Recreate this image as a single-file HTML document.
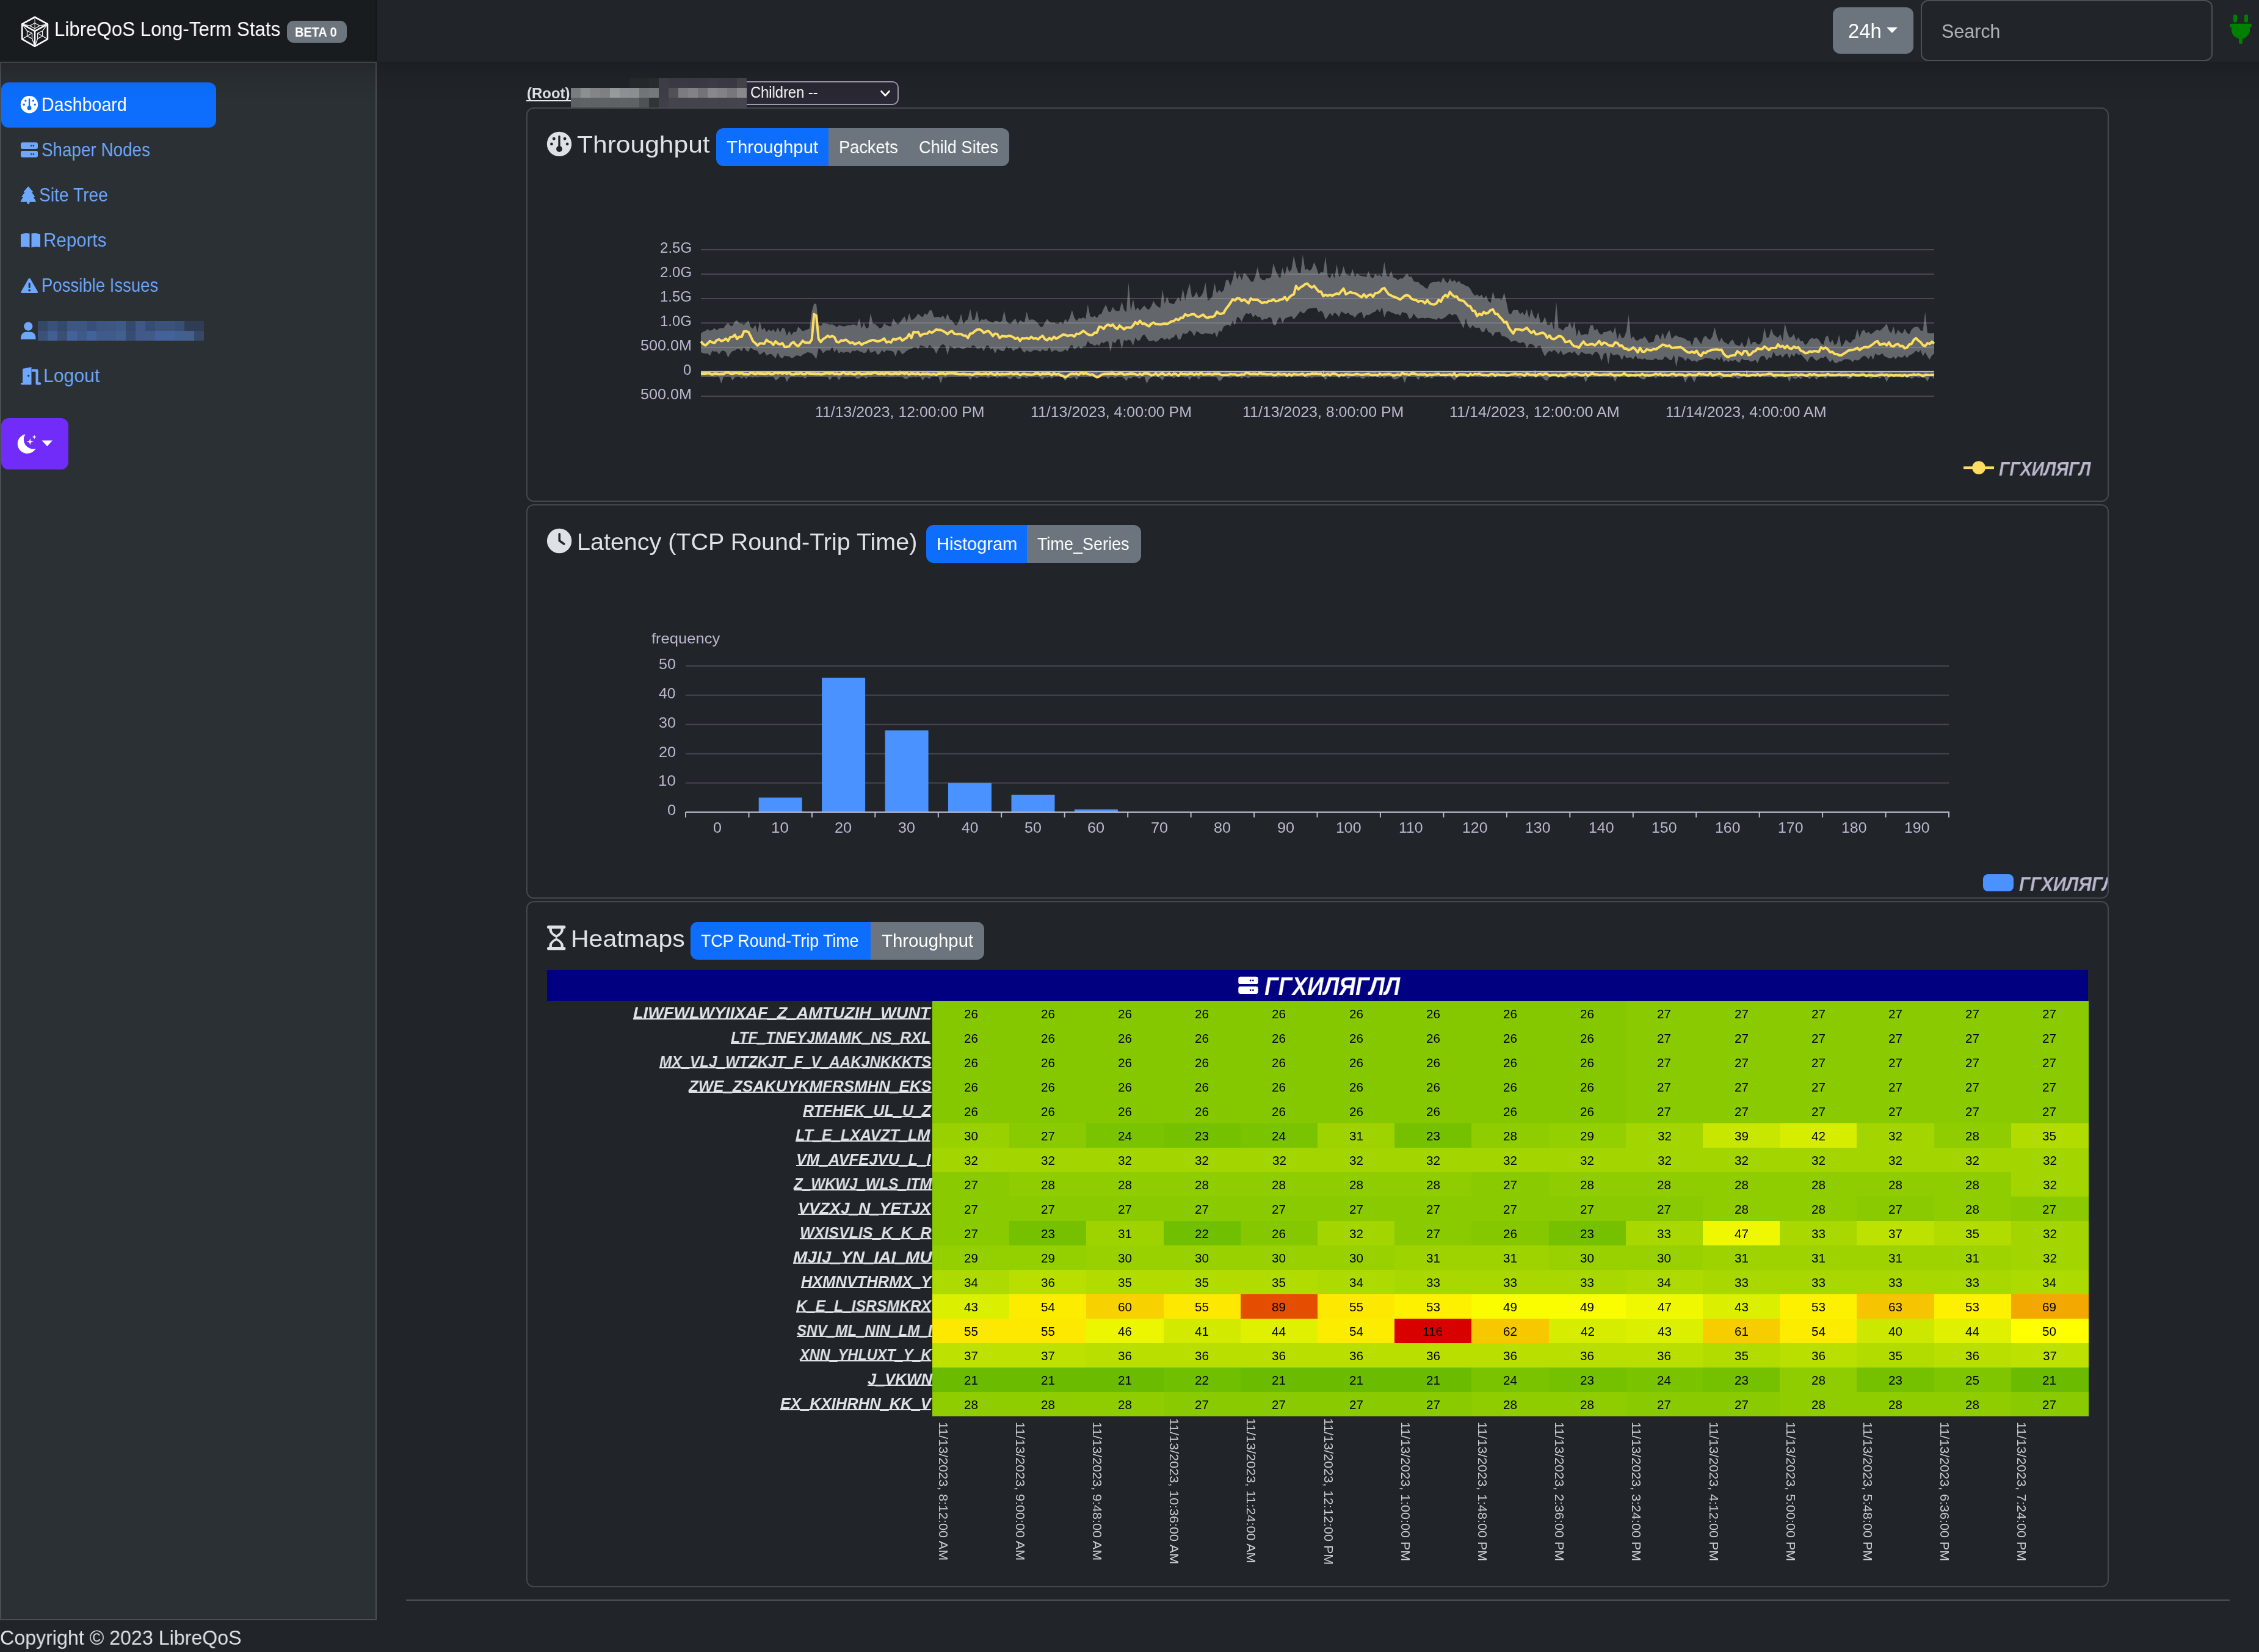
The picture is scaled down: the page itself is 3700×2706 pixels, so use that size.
<!DOCTYPE html><html><head><meta charset="utf-8"><style>
html,body{margin:0;padding:0;}
body{width:3700px;height:2706px;overflow:hidden;position:relative;background:#212529;font-family:"Liberation Sans",sans-serif;}
.t{position:absolute;white-space:nowrap;line-height:1;transform-origin:0 0;will-change:transform;}
.r{position:absolute;box-sizing:border-box;}
svg{position:absolute;overflow:visible;}
</style></head><body><div class="r" style="left:0;top:101px;width:3700px;height:60px;background:linear-gradient(rgba(0,0,0,0.16),rgba(0,0,0,0.05) 45%,rgba(0,0,0,0));z-index:5;pointer-events:none"></div>
<div class="r" style="left:0px;top:0px;width:3700px;height:101px;background:#212529;"></div>
<div class="r" style="left:0px;top:0px;width:617px;height:101px;background:#191c1f;box-shadow:inset -2px 0 0 rgba(0,0,0,.25);"></div>
<div class="r" style="left:470px;top:34px;width:97.5px;height:36px;background:#6c757d;border-radius:11px;"></div>
<div class="r" style="left:3002px;top:12px;width:132px;height:76px;background:#6c757d;border-radius:12px;"></div>
<div class="r" style="left:3146px;top:0px;width:478px;height:100px;border:2px solid #495057;border-radius:12px;background:#212529;"></div>
<div class="r" style="left:0px;top:101px;width:617px;height:2553px;background:#2b3035;border:2px solid #4a4f55;"></div>
<div class="r" style="left:2px;top:135px;width:352px;height:73.5px;background:#0d6efd;border-radius:12px;"></div>
<div class="r" style="left:2px;top:685px;width:110px;height:84px;background:#712cf9;border-radius:12px;"></div>
<div class="r" style="left:62px;top:526px;width:16px;height:16px;background:#334766;"></div>
<div class="r" style="left:62px;top:542px;width:16px;height:16px;background:#3a527a;"></div>
<div class="r" style="left:78px;top:526px;width:16px;height:16px;background:#3a5279;"></div>
<div class="r" style="left:78px;top:542px;width:16px;height:16px;background:#41608f;"></div>
<div class="r" style="left:94px;top:526px;width:16px;height:16px;background:#344a6d;"></div>
<div class="r" style="left:94px;top:542px;width:16px;height:16px;background:#384f76;"></div>
<div class="r" style="left:110px;top:526px;width:16px;height:16px;background:#3e5782;"></div>
<div class="r" style="left:110px;top:542px;width:16px;height:16px;background:#43629a;"></div>
<div class="r" style="left:126px;top:526px;width:16px;height:16px;background:#3e5781;"></div>
<div class="r" style="left:126px;top:542px;width:16px;height:16px;background:#3e5a88;"></div>
<div class="r" style="left:142px;top:526px;width:16px;height:16px;background:#385079;"></div>
<div class="r" style="left:142px;top:542px;width:16px;height:16px;background:#43629a;"></div>
<div class="r" style="left:158px;top:526px;width:16px;height:16px;background:#3d5680;"></div>
<div class="r" style="left:158px;top:542px;width:16px;height:16px;background:#3f5b8a;"></div>
<div class="r" style="left:174px;top:526px;width:16px;height:16px;background:#3e5782;"></div>
<div class="r" style="left:174px;top:542px;width:16px;height:16px;background:#3f5b8a;"></div>
<div class="r" style="left:190px;top:526px;width:16px;height:16px;background:#405a86;"></div>
<div class="r" style="left:190px;top:542px;width:16px;height:16px;background:#41608f;"></div>
<div class="r" style="left:206px;top:526px;width:16px;height:16px;background:#334a6c;"></div>
<div class="r" style="left:206px;top:542px;width:16px;height:16px;background:#364d73;"></div>
<div class="r" style="left:222px;top:526px;width:16px;height:16px;background:#3f5884;"></div>
<div class="r" style="left:222px;top:542px;width:16px;height:16px;background:#40598a;"></div>
<div class="r" style="left:238px;top:526px;width:16px;height:16px;background:#364d73;"></div>
<div class="r" style="left:238px;top:542px;width:16px;height:16px;background:#405a89;"></div>
<div class="r" style="left:254px;top:526px;width:16px;height:16px;background:#3b5379;"></div>
<div class="r" style="left:254px;top:542px;width:16px;height:16px;background:#43629a;"></div>
<div class="r" style="left:270px;top:526px;width:16px;height:16px;background:#3b537b;"></div>
<div class="r" style="left:270px;top:542px;width:16px;height:16px;background:#43629a;"></div>
<div class="r" style="left:286px;top:526px;width:16px;height:16px;background:#374f75;"></div>
<div class="r" style="left:286px;top:542px;width:16px;height:16px;background:#41608f;"></div>
<div class="r" style="left:302px;top:526px;width:16px;height:16px;background:#2e3d55;"></div>
<div class="r" style="left:302px;top:542px;width:16px;height:16px;background:#455f8c;"></div>
<div class="r" style="left:318px;top:526px;width:16px;height:16px;background:#2f3d54;"></div>
<div class="r" style="left:318px;top:542px;width:16px;height:16px;background:#354865;"></div>
<div class="r" style="left:665px;top:2620px;width:2987px;height:2px;background:#4e5358;"></div>
<div class="r" style="left:935px;top:128px;width:16px;height:16px;background:#212429;"></div>
<div class="r" style="left:935px;top:144px;width:16px;height:16px;background:#7c7f82;"></div>
<div class="r" style="left:935px;top:160px;width:16px;height:16px;background:#5e6164;"></div>
<div class="r" style="left:951px;top:128px;width:16px;height:16px;background:#212429;"></div>
<div class="r" style="left:951px;top:144px;width:16px;height:16px;background:#8f9295;"></div>
<div class="r" style="left:951px;top:160px;width:16px;height:16px;background:#606366;"></div>
<div class="r" style="left:967px;top:128px;width:16px;height:16px;background:#212429;"></div>
<div class="r" style="left:967px;top:144px;width:16px;height:16px;background:#85888b;"></div>
<div class="r" style="left:967px;top:160px;width:16px;height:16px;background:#5f6265;"></div>
<div class="r" style="left:983px;top:128px;width:16px;height:16px;background:#212429;"></div>
<div class="r" style="left:983px;top:144px;width:16px;height:16px;background:#808386;"></div>
<div class="r" style="left:983px;top:160px;width:16px;height:16px;background:#606366;"></div>
<div class="r" style="left:999px;top:128px;width:16px;height:16px;background:#212429;"></div>
<div class="r" style="left:999px;top:144px;width:16px;height:16px;background:#9a9d9f;"></div>
<div class="r" style="left:999px;top:160px;width:16px;height:16px;background:#5f6265;"></div>
<div class="r" style="left:1015px;top:128px;width:16px;height:16px;background:#212429;"></div>
<div class="r" style="left:1015px;top:144px;width:16px;height:16px;background:#909396;"></div>
<div class="r" style="left:1015px;top:160px;width:16px;height:16px;background:#606366;"></div>
<div class="r" style="left:1031px;top:128px;width:16px;height:16px;background:#282b2d;"></div>
<div class="r" style="left:1031px;top:144px;width:16px;height:16px;background:#8e9194;"></div>
<div class="r" style="left:1031px;top:160px;width:16px;height:16px;background:#5f6265;"></div>
<div class="r" style="left:1047px;top:128px;width:16px;height:16px;background:#272a2c;"></div>
<div class="r" style="left:1047px;top:144px;width:16px;height:16px;background:#74777a;"></div>
<div class="r" style="left:1047px;top:160px;width:16px;height:16px;background:#4f5255;"></div>
<div class="r" style="left:1063px;top:128px;width:16px;height:16px;background:#2a2d2f;"></div>
<div class="r" style="left:1063px;top:144px;width:16px;height:16px;background:#787b7d;"></div>
<div class="r" style="left:1063px;top:160px;width:16px;height:16px;background:#303437;"></div>
<div class="r" style="left:1079px;top:128px;width:16px;height:16px;background:#403f4a;"></div>
<div class="r" style="left:1079px;top:144px;width:16px;height:16px;background:#3f3e48;"></div>
<div class="r" style="left:1079px;top:160px;width:16px;height:16px;background:#403f49;"></div>
<div class="r" style="left:1095px;top:128px;width:16px;height:16px;background:#3d3c46;"></div>
<div class="r" style="left:1095px;top:144px;width:16px;height:16px;background:#535257;"></div>
<div class="r" style="left:1095px;top:160px;width:16px;height:16px;background:#45444d;"></div>
<div class="r" style="left:1111px;top:128px;width:16px;height:16px;background:#3d3c47;"></div>
<div class="r" style="left:1111px;top:144px;width:16px;height:16px;background:#7e7d82;"></div>
<div class="r" style="left:1111px;top:160px;width:16px;height:16px;background:#44434c;"></div>
<div class="r" style="left:1127px;top:128px;width:16px;height:16px;background:#3c3b45;"></div>
<div class="r" style="left:1127px;top:144px;width:16px;height:16px;background:#858489;"></div>
<div class="r" style="left:1127px;top:160px;width:16px;height:16px;background:#45444d;"></div>
<div class="r" style="left:1143px;top:128px;width:16px;height:16px;background:#3d3c46;"></div>
<div class="r" style="left:1143px;top:144px;width:16px;height:16px;background:#76757a;"></div>
<div class="r" style="left:1143px;top:160px;width:16px;height:16px;background:#44434c;"></div>
<div class="r" style="left:1159px;top:128px;width:16px;height:16px;background:#3f3e48;"></div>
<div class="r" style="left:1159px;top:144px;width:16px;height:16px;background:#8b8a8f;"></div>
<div class="r" style="left:1159px;top:160px;width:16px;height:16px;background:#45444d;"></div>
<div class="r" style="left:1175px;top:128px;width:16px;height:16px;background:#3d3c46;"></div>
<div class="r" style="left:1175px;top:144px;width:16px;height:16px;background:#858489;"></div>
<div class="r" style="left:1175px;top:160px;width:16px;height:16px;background:#44434c;"></div>
<div class="r" style="left:1191px;top:128px;width:16px;height:16px;background:#3c3b45;"></div>
<div class="r" style="left:1191px;top:144px;width:16px;height:16px;background:#7a797e;"></div>
<div class="r" style="left:1191px;top:160px;width:16px;height:16px;background:#45444d;"></div>
<div class="r" style="left:1207px;top:128px;width:16px;height:16px;background:#46454e;"></div>
<div class="r" style="left:1207px;top:144px;width:16px;height:16px;background:#8c8b90;"></div>
<div class="r" style="left:1207px;top:160px;width:16px;height:16px;background:#46454e;"></div>
<div class="r" style="left:1223px;top:133px;width:249px;height:38.5px;background:#2a2834;border:2px solid #9c9aab;border-left:none;border-radius:0 10px 10px 0;"></div>
<div class="r" style="left:862px;top:164.2px;width:73px;height:2.0px;background:#e6e8eb;"></div>
<div class="r" style="left:862px;top:176px;width:2592px;height:646px;border:2px solid #45494d;border-radius:12px;"></div>
<div class="r" style="left:862px;top:826px;width:2592px;height:646px;border:2px solid #45494d;border-radius:12px;"></div>
<div class="r" style="left:862px;top:1476px;width:2592px;height:1124px;border:2px solid #45494d;border-radius:12px;"></div>
<div class="r" style="left:1173px;top:210px;width:184px;height:62px;background:#0d6efd;border-radius:12px 0 0 12px;"></div>
<div class="r" style="left:1357px;top:210px;width:131px;height:62px;background:#6c757d;"></div>
<div class="r" style="left:1488px;top:210px;width:165px;height:62px;background:#6c757d;border-radius:0 12px 12px 0;"></div>
<div class="r" style="left:1517px;top:860px;width:165px;height:62px;background:#0d6efd;border-radius:12px 0 0 12px;"></div>
<div class="r" style="left:1682px;top:860px;width:187px;height:62px;background:#6c757d;border-radius:0 12px 12px 0;"></div>
<div class="r" style="left:1131px;top:1510px;width:295px;height:62px;background:#0d6efd;border-radius:12px 0 0 12px;"></div>
<div class="r" style="left:1426px;top:1510px;width:186px;height:62px;background:#6c757d;border-radius:0 12px 12px 0;"></div>
<div class="r" style="left:896px;top:1589px;width:2524px;height:50.5px;background:#000080;"></div>
<div class="r" style="left:1527.0px;top:1639.5px;width:126.79999999999995px;height:40.5px;background:rgb(133,200,0);"></div>
<div class="r" style="left:1653.2px;top:1639.5px;width:126.79999999999995px;height:40.5px;background:rgb(133,200,0);"></div>
<div class="r" style="left:1779.4px;top:1639.5px;width:126.79999999999995px;height:40.5px;background:rgb(133,200,0);"></div>
<div class="r" style="left:1905.6px;top:1639.5px;width:126.80000000000018px;height:40.5px;background:rgb(133,200,0);"></div>
<div class="r" style="left:2031.8px;top:1639.5px;width:126.79999999999995px;height:40.5px;background:rgb(133,200,0);"></div>
<div class="r" style="left:2158.0px;top:1639.5px;width:126.80000000000018px;height:40.5px;background:rgb(133,200,0);"></div>
<div class="r" style="left:2284.2px;top:1639.5px;width:126.80000000000018px;height:40.5px;background:rgb(133,200,0);"></div>
<div class="r" style="left:2410.4px;top:1639.5px;width:126.79999999999973px;height:40.5px;background:rgb(133,200,0);"></div>
<div class="r" style="left:2536.6px;top:1639.5px;width:126.80000000000018px;height:40.5px;background:rgb(133,200,0);"></div>
<div class="r" style="left:2662.8px;top:1639.5px;width:126.79999999999973px;height:40.5px;background:rgb(138,202,0);"></div>
<div class="r" style="left:2789.0px;top:1639.5px;width:126.80000000000018px;height:40.5px;background:rgb(138,202,0);"></div>
<div class="r" style="left:2915.2px;top:1639.5px;width:126.80000000000018px;height:40.5px;background:rgb(138,202,0);"></div>
<div class="r" style="left:3041.4px;top:1639.5px;width:126.79999999999973px;height:40.5px;background:rgb(138,202,0);"></div>
<div class="r" style="left:3167.6px;top:1639.5px;width:126.80000000000018px;height:40.5px;background:rgb(138,202,0);"></div>
<div class="r" style="left:3293.8px;top:1639.5px;width:126.79999999999973px;height:40.5px;background:rgb(138,202,0);"></div>
<div class="r" style="left:1527.0px;top:1679.5px;width:126.79999999999995px;height:40.5px;background:rgb(133,200,0);"></div>
<div class="r" style="left:1653.2px;top:1679.5px;width:126.79999999999995px;height:40.5px;background:rgb(133,200,0);"></div>
<div class="r" style="left:1779.4px;top:1679.5px;width:126.79999999999995px;height:40.5px;background:rgb(133,200,0);"></div>
<div class="r" style="left:1905.6px;top:1679.5px;width:126.80000000000018px;height:40.5px;background:rgb(133,200,0);"></div>
<div class="r" style="left:2031.8px;top:1679.5px;width:126.79999999999995px;height:40.5px;background:rgb(133,200,0);"></div>
<div class="r" style="left:2158.0px;top:1679.5px;width:126.80000000000018px;height:40.5px;background:rgb(133,200,0);"></div>
<div class="r" style="left:2284.2px;top:1679.5px;width:126.80000000000018px;height:40.5px;background:rgb(133,200,0);"></div>
<div class="r" style="left:2410.4px;top:1679.5px;width:126.79999999999973px;height:40.5px;background:rgb(133,200,0);"></div>
<div class="r" style="left:2536.6px;top:1679.5px;width:126.80000000000018px;height:40.5px;background:rgb(133,200,0);"></div>
<div class="r" style="left:2662.8px;top:1679.5px;width:126.79999999999973px;height:40.5px;background:rgb(138,202,0);"></div>
<div class="r" style="left:2789.0px;top:1679.5px;width:126.80000000000018px;height:40.5px;background:rgb(138,202,0);"></div>
<div class="r" style="left:2915.2px;top:1679.5px;width:126.80000000000018px;height:40.5px;background:rgb(138,202,0);"></div>
<div class="r" style="left:3041.4px;top:1679.5px;width:126.79999999999973px;height:40.5px;background:rgb(138,202,0);"></div>
<div class="r" style="left:3167.6px;top:1679.5px;width:126.80000000000018px;height:40.5px;background:rgb(138,202,0);"></div>
<div class="r" style="left:3293.8px;top:1679.5px;width:126.79999999999973px;height:40.5px;background:rgb(138,202,0);"></div>
<div class="r" style="left:1527.0px;top:1719.5px;width:126.79999999999995px;height:40.5px;background:rgb(133,200,0);"></div>
<div class="r" style="left:1653.2px;top:1719.5px;width:126.79999999999995px;height:40.5px;background:rgb(133,200,0);"></div>
<div class="r" style="left:1779.4px;top:1719.5px;width:126.79999999999995px;height:40.5px;background:rgb(133,200,0);"></div>
<div class="r" style="left:1905.6px;top:1719.5px;width:126.80000000000018px;height:40.5px;background:rgb(133,200,0);"></div>
<div class="r" style="left:2031.8px;top:1719.5px;width:126.79999999999995px;height:40.5px;background:rgb(133,200,0);"></div>
<div class="r" style="left:2158.0px;top:1719.5px;width:126.80000000000018px;height:40.5px;background:rgb(133,200,0);"></div>
<div class="r" style="left:2284.2px;top:1719.5px;width:126.80000000000018px;height:40.5px;background:rgb(133,200,0);"></div>
<div class="r" style="left:2410.4px;top:1719.5px;width:126.79999999999973px;height:40.5px;background:rgb(133,200,0);"></div>
<div class="r" style="left:2536.6px;top:1719.5px;width:126.80000000000018px;height:40.5px;background:rgb(133,200,0);"></div>
<div class="r" style="left:2662.8px;top:1719.5px;width:126.79999999999973px;height:40.5px;background:rgb(138,202,0);"></div>
<div class="r" style="left:2789.0px;top:1719.5px;width:126.80000000000018px;height:40.5px;background:rgb(138,202,0);"></div>
<div class="r" style="left:2915.2px;top:1719.5px;width:126.80000000000018px;height:40.5px;background:rgb(138,202,0);"></div>
<div class="r" style="left:3041.4px;top:1719.5px;width:126.79999999999973px;height:40.5px;background:rgb(138,202,0);"></div>
<div class="r" style="left:3167.6px;top:1719.5px;width:126.80000000000018px;height:40.5px;background:rgb(138,202,0);"></div>
<div class="r" style="left:3293.8px;top:1719.5px;width:126.79999999999973px;height:40.5px;background:rgb(138,202,0);"></div>
<div class="r" style="left:1527.0px;top:1759.5px;width:126.79999999999995px;height:40.5px;background:rgb(133,200,0);"></div>
<div class="r" style="left:1653.2px;top:1759.5px;width:126.79999999999995px;height:40.5px;background:rgb(133,200,0);"></div>
<div class="r" style="left:1779.4px;top:1759.5px;width:126.79999999999995px;height:40.5px;background:rgb(133,200,0);"></div>
<div class="r" style="left:1905.6px;top:1759.5px;width:126.80000000000018px;height:40.5px;background:rgb(133,200,0);"></div>
<div class="r" style="left:2031.8px;top:1759.5px;width:126.79999999999995px;height:40.5px;background:rgb(133,200,0);"></div>
<div class="r" style="left:2158.0px;top:1759.5px;width:126.80000000000018px;height:40.5px;background:rgb(133,200,0);"></div>
<div class="r" style="left:2284.2px;top:1759.5px;width:126.80000000000018px;height:40.5px;background:rgb(133,200,0);"></div>
<div class="r" style="left:2410.4px;top:1759.5px;width:126.79999999999973px;height:40.5px;background:rgb(133,200,0);"></div>
<div class="r" style="left:2536.6px;top:1759.5px;width:126.80000000000018px;height:40.5px;background:rgb(133,200,0);"></div>
<div class="r" style="left:2662.8px;top:1759.5px;width:126.79999999999973px;height:40.5px;background:rgb(138,202,0);"></div>
<div class="r" style="left:2789.0px;top:1759.5px;width:126.80000000000018px;height:40.5px;background:rgb(138,202,0);"></div>
<div class="r" style="left:2915.2px;top:1759.5px;width:126.80000000000018px;height:40.5px;background:rgb(138,202,0);"></div>
<div class="r" style="left:3041.4px;top:1759.5px;width:126.79999999999973px;height:40.5px;background:rgb(138,202,0);"></div>
<div class="r" style="left:3167.6px;top:1759.5px;width:126.80000000000018px;height:40.5px;background:rgb(138,202,0);"></div>
<div class="r" style="left:3293.8px;top:1759.5px;width:126.79999999999973px;height:40.5px;background:rgb(138,202,0);"></div>
<div class="r" style="left:1527.0px;top:1799.5px;width:126.79999999999995px;height:40.5px;background:rgb(133,200,0);"></div>
<div class="r" style="left:1653.2px;top:1799.5px;width:126.79999999999995px;height:40.5px;background:rgb(133,200,0);"></div>
<div class="r" style="left:1779.4px;top:1799.5px;width:126.79999999999995px;height:40.5px;background:rgb(133,200,0);"></div>
<div class="r" style="left:1905.6px;top:1799.5px;width:126.80000000000018px;height:40.5px;background:rgb(133,200,0);"></div>
<div class="r" style="left:2031.8px;top:1799.5px;width:126.79999999999995px;height:40.5px;background:rgb(133,200,0);"></div>
<div class="r" style="left:2158.0px;top:1799.5px;width:126.80000000000018px;height:40.5px;background:rgb(133,200,0);"></div>
<div class="r" style="left:2284.2px;top:1799.5px;width:126.80000000000018px;height:40.5px;background:rgb(133,200,0);"></div>
<div class="r" style="left:2410.4px;top:1799.5px;width:126.79999999999973px;height:40.5px;background:rgb(133,200,0);"></div>
<div class="r" style="left:2536.6px;top:1799.5px;width:126.80000000000018px;height:40.5px;background:rgb(133,200,0);"></div>
<div class="r" style="left:2662.8px;top:1799.5px;width:126.79999999999973px;height:40.5px;background:rgb(138,202,0);"></div>
<div class="r" style="left:2789.0px;top:1799.5px;width:126.80000000000018px;height:40.5px;background:rgb(138,202,0);"></div>
<div class="r" style="left:2915.2px;top:1799.5px;width:126.80000000000018px;height:40.5px;background:rgb(138,202,0);"></div>
<div class="r" style="left:3041.4px;top:1799.5px;width:126.79999999999973px;height:40.5px;background:rgb(138,202,0);"></div>
<div class="r" style="left:3167.6px;top:1799.5px;width:126.80000000000018px;height:40.5px;background:rgb(138,202,0);"></div>
<div class="r" style="left:3293.8px;top:1799.5px;width:126.79999999999973px;height:40.5px;background:rgb(138,202,0);"></div>
<div class="r" style="left:1527.0px;top:1839.5px;width:126.79999999999995px;height:40.5px;background:rgb(153,209,0);"></div>
<div class="r" style="left:1653.2px;top:1839.5px;width:126.79999999999995px;height:40.5px;background:rgb(138,202,0);"></div>
<div class="r" style="left:1779.4px;top:1839.5px;width:126.79999999999995px;height:40.5px;background:rgb(122,195,0);"></div>
<div class="r" style="left:1905.6px;top:1839.5px;width:126.80000000000018px;height:40.5px;background:rgb(117,193,0);"></div>
<div class="r" style="left:2031.8px;top:1839.5px;width:126.79999999999995px;height:40.5px;background:rgb(122,195,0);"></div>
<div class="r" style="left:2158.0px;top:1839.5px;width:126.80000000000018px;height:40.5px;background:rgb(158,211,0);"></div>
<div class="r" style="left:2284.2px;top:1839.5px;width:126.80000000000018px;height:40.5px;background:rgb(117,193,0);"></div>
<div class="r" style="left:2410.4px;top:1839.5px;width:126.79999999999973px;height:40.5px;background:rgb(143,204,0);"></div>
<div class="r" style="left:2536.6px;top:1839.5px;width:126.80000000000018px;height:40.5px;background:rgb(148,207,0);"></div>
<div class="r" style="left:2662.8px;top:1839.5px;width:126.79999999999973px;height:40.5px;background:rgb(163,214,0);"></div>
<div class="r" style="left:2789.0px;top:1839.5px;width:126.80000000000018px;height:40.5px;background:rgb(199,230,0);"></div>
<div class="r" style="left:2915.2px;top:1839.5px;width:126.80000000000018px;height:40.5px;background:rgb(214,237,0);"></div>
<div class="r" style="left:3041.4px;top:1839.5px;width:126.79999999999973px;height:40.5px;background:rgb(163,214,0);"></div>
<div class="r" style="left:3167.6px;top:1839.5px;width:126.80000000000018px;height:40.5px;background:rgb(143,204,0);"></div>
<div class="r" style="left:3293.8px;top:1839.5px;width:126.79999999999973px;height:40.5px;background:rgb(178,220,0);"></div>
<div class="r" style="left:1527.0px;top:1879.5px;width:126.79999999999995px;height:40.5px;background:rgb(163,214,0);"></div>
<div class="r" style="left:1653.2px;top:1879.5px;width:126.79999999999995px;height:40.5px;background:rgb(163,214,0);"></div>
<div class="r" style="left:1779.4px;top:1879.5px;width:126.79999999999995px;height:40.5px;background:rgb(163,214,0);"></div>
<div class="r" style="left:1905.6px;top:1879.5px;width:126.80000000000018px;height:40.5px;background:rgb(163,214,0);"></div>
<div class="r" style="left:2031.8px;top:1879.5px;width:126.79999999999995px;height:40.5px;background:rgb(163,214,0);"></div>
<div class="r" style="left:2158.0px;top:1879.5px;width:126.80000000000018px;height:40.5px;background:rgb(163,214,0);"></div>
<div class="r" style="left:2284.2px;top:1879.5px;width:126.80000000000018px;height:40.5px;background:rgb(163,214,0);"></div>
<div class="r" style="left:2410.4px;top:1879.5px;width:126.79999999999973px;height:40.5px;background:rgb(163,214,0);"></div>
<div class="r" style="left:2536.6px;top:1879.5px;width:126.80000000000018px;height:40.5px;background:rgb(163,214,0);"></div>
<div class="r" style="left:2662.8px;top:1879.5px;width:126.79999999999973px;height:40.5px;background:rgb(163,214,0);"></div>
<div class="r" style="left:2789.0px;top:1879.5px;width:126.80000000000018px;height:40.5px;background:rgb(163,214,0);"></div>
<div class="r" style="left:2915.2px;top:1879.5px;width:126.80000000000018px;height:40.5px;background:rgb(163,214,0);"></div>
<div class="r" style="left:3041.4px;top:1879.5px;width:126.79999999999973px;height:40.5px;background:rgb(163,214,0);"></div>
<div class="r" style="left:3167.6px;top:1879.5px;width:126.80000000000018px;height:40.5px;background:rgb(163,214,0);"></div>
<div class="r" style="left:3293.8px;top:1879.5px;width:126.79999999999973px;height:40.5px;background:rgb(163,214,0);"></div>
<div class="r" style="left:1527.0px;top:1919.5px;width:126.79999999999995px;height:40.5px;background:rgb(138,202,0);"></div>
<div class="r" style="left:1653.2px;top:1919.5px;width:126.79999999999995px;height:40.5px;background:rgb(143,204,0);"></div>
<div class="r" style="left:1779.4px;top:1919.5px;width:126.79999999999995px;height:40.5px;background:rgb(143,204,0);"></div>
<div class="r" style="left:1905.6px;top:1919.5px;width:126.80000000000018px;height:40.5px;background:rgb(143,204,0);"></div>
<div class="r" style="left:2031.8px;top:1919.5px;width:126.79999999999995px;height:40.5px;background:rgb(143,204,0);"></div>
<div class="r" style="left:2158.0px;top:1919.5px;width:126.80000000000018px;height:40.5px;background:rgb(143,204,0);"></div>
<div class="r" style="left:2284.2px;top:1919.5px;width:126.80000000000018px;height:40.5px;background:rgb(143,204,0);"></div>
<div class="r" style="left:2410.4px;top:1919.5px;width:126.79999999999973px;height:40.5px;background:rgb(138,202,0);"></div>
<div class="r" style="left:2536.6px;top:1919.5px;width:126.80000000000018px;height:40.5px;background:rgb(143,204,0);"></div>
<div class="r" style="left:2662.8px;top:1919.5px;width:126.79999999999973px;height:40.5px;background:rgb(143,204,0);"></div>
<div class="r" style="left:2789.0px;top:1919.5px;width:126.80000000000018px;height:40.5px;background:rgb(143,204,0);"></div>
<div class="r" style="left:2915.2px;top:1919.5px;width:126.80000000000018px;height:40.5px;background:rgb(143,204,0);"></div>
<div class="r" style="left:3041.4px;top:1919.5px;width:126.79999999999973px;height:40.5px;background:rgb(143,204,0);"></div>
<div class="r" style="left:3167.6px;top:1919.5px;width:126.80000000000018px;height:40.5px;background:rgb(143,204,0);"></div>
<div class="r" style="left:3293.8px;top:1919.5px;width:126.79999999999973px;height:40.5px;background:rgb(163,214,0);"></div>
<div class="r" style="left:1527.0px;top:1959.5px;width:126.79999999999995px;height:40.5px;background:rgb(138,202,0);"></div>
<div class="r" style="left:1653.2px;top:1959.5px;width:126.79999999999995px;height:40.5px;background:rgb(138,202,0);"></div>
<div class="r" style="left:1779.4px;top:1959.5px;width:126.79999999999995px;height:40.5px;background:rgb(138,202,0);"></div>
<div class="r" style="left:1905.6px;top:1959.5px;width:126.80000000000018px;height:40.5px;background:rgb(138,202,0);"></div>
<div class="r" style="left:2031.8px;top:1959.5px;width:126.79999999999995px;height:40.5px;background:rgb(138,202,0);"></div>
<div class="r" style="left:2158.0px;top:1959.5px;width:126.80000000000018px;height:40.5px;background:rgb(138,202,0);"></div>
<div class="r" style="left:2284.2px;top:1959.5px;width:126.80000000000018px;height:40.5px;background:rgb(138,202,0);"></div>
<div class="r" style="left:2410.4px;top:1959.5px;width:126.79999999999973px;height:40.5px;background:rgb(138,202,0);"></div>
<div class="r" style="left:2536.6px;top:1959.5px;width:126.80000000000018px;height:40.5px;background:rgb(138,202,0);"></div>
<div class="r" style="left:2662.8px;top:1959.5px;width:126.79999999999973px;height:40.5px;background:rgb(138,202,0);"></div>
<div class="r" style="left:2789.0px;top:1959.5px;width:126.80000000000018px;height:40.5px;background:rgb(143,204,0);"></div>
<div class="r" style="left:2915.2px;top:1959.5px;width:126.80000000000018px;height:40.5px;background:rgb(143,204,0);"></div>
<div class="r" style="left:3041.4px;top:1959.5px;width:126.79999999999973px;height:40.5px;background:rgb(138,202,0);"></div>
<div class="r" style="left:3167.6px;top:1959.5px;width:126.80000000000018px;height:40.5px;background:rgb(143,204,0);"></div>
<div class="r" style="left:3293.8px;top:1959.5px;width:126.79999999999973px;height:40.5px;background:rgb(138,202,0);"></div>
<div class="r" style="left:1527.0px;top:1999.5px;width:126.79999999999995px;height:40.5px;background:rgb(138,202,0);"></div>
<div class="r" style="left:1653.2px;top:1999.5px;width:126.79999999999995px;height:40.5px;background:rgb(117,193,0);"></div>
<div class="r" style="left:1779.4px;top:1999.5px;width:126.79999999999995px;height:40.5px;background:rgb(158,211,0);"></div>
<div class="r" style="left:1905.6px;top:1999.5px;width:126.80000000000018px;height:40.5px;background:rgb(112,191,0);"></div>
<div class="r" style="left:2031.8px;top:1999.5px;width:126.79999999999995px;height:40.5px;background:rgb(133,200,0);"></div>
<div class="r" style="left:2158.0px;top:1999.5px;width:126.80000000000018px;height:40.5px;background:rgb(163,214,0);"></div>
<div class="r" style="left:2284.2px;top:1999.5px;width:126.80000000000018px;height:40.5px;background:rgb(138,202,0);"></div>
<div class="r" style="left:2410.4px;top:1999.5px;width:126.79999999999973px;height:40.5px;background:rgb(133,200,0);"></div>
<div class="r" style="left:2536.6px;top:1999.5px;width:126.80000000000018px;height:40.5px;background:rgb(117,193,0);"></div>
<div class="r" style="left:2662.8px;top:1999.5px;width:126.79999999999973px;height:40.5px;background:rgb(168,216,0);"></div>
<div class="r" style="left:2789.0px;top:1999.5px;width:126.80000000000018px;height:40.5px;background:rgb(240,248,0);"></div>
<div class="r" style="left:2915.2px;top:1999.5px;width:126.80000000000018px;height:40.5px;background:rgb(168,216,0);"></div>
<div class="r" style="left:3041.4px;top:1999.5px;width:126.79999999999973px;height:40.5px;background:rgb(189,225,0);"></div>
<div class="r" style="left:3167.6px;top:1999.5px;width:126.80000000000018px;height:40.5px;background:rgb(178,220,0);"></div>
<div class="r" style="left:3293.8px;top:1999.5px;width:126.79999999999973px;height:40.5px;background:rgb(163,214,0);"></div>
<div class="r" style="left:1527.0px;top:2039.5px;width:126.79999999999995px;height:40.5px;background:rgb(148,207,0);"></div>
<div class="r" style="left:1653.2px;top:2039.5px;width:126.79999999999995px;height:40.5px;background:rgb(148,207,0);"></div>
<div class="r" style="left:1779.4px;top:2039.5px;width:126.79999999999995px;height:40.5px;background:rgb(153,209,0);"></div>
<div class="r" style="left:1905.6px;top:2039.5px;width:126.80000000000018px;height:40.5px;background:rgb(153,209,0);"></div>
<div class="r" style="left:2031.8px;top:2039.5px;width:126.79999999999995px;height:40.5px;background:rgb(153,209,0);"></div>
<div class="r" style="left:2158.0px;top:2039.5px;width:126.80000000000018px;height:40.5px;background:rgb(153,209,0);"></div>
<div class="r" style="left:2284.2px;top:2039.5px;width:126.80000000000018px;height:40.5px;background:rgb(158,211,0);"></div>
<div class="r" style="left:2410.4px;top:2039.5px;width:126.79999999999973px;height:40.5px;background:rgb(158,211,0);"></div>
<div class="r" style="left:2536.6px;top:2039.5px;width:126.80000000000018px;height:40.5px;background:rgb(153,209,0);"></div>
<div class="r" style="left:2662.8px;top:2039.5px;width:126.79999999999973px;height:40.5px;background:rgb(153,209,0);"></div>
<div class="r" style="left:2789.0px;top:2039.5px;width:126.80000000000018px;height:40.5px;background:rgb(158,211,0);"></div>
<div class="r" style="left:2915.2px;top:2039.5px;width:126.80000000000018px;height:40.5px;background:rgb(158,211,0);"></div>
<div class="r" style="left:3041.4px;top:2039.5px;width:126.79999999999973px;height:40.5px;background:rgb(158,211,0);"></div>
<div class="r" style="left:3167.6px;top:2039.5px;width:126.80000000000018px;height:40.5px;background:rgb(158,211,0);"></div>
<div class="r" style="left:3293.8px;top:2039.5px;width:126.79999999999973px;height:40.5px;background:rgb(163,214,0);"></div>
<div class="r" style="left:1527.0px;top:2079.5px;width:126.79999999999995px;height:40.5px;background:rgb(173,218,0);"></div>
<div class="r" style="left:1653.2px;top:2079.5px;width:126.79999999999995px;height:40.5px;background:rgb(184,223,0);"></div>
<div class="r" style="left:1779.4px;top:2079.5px;width:126.79999999999995px;height:40.5px;background:rgb(178,220,0);"></div>
<div class="r" style="left:1905.6px;top:2079.5px;width:126.80000000000018px;height:40.5px;background:rgb(178,220,0);"></div>
<div class="r" style="left:2031.8px;top:2079.5px;width:126.79999999999995px;height:40.5px;background:rgb(178,220,0);"></div>
<div class="r" style="left:2158.0px;top:2079.5px;width:126.80000000000018px;height:40.5px;background:rgb(173,218,0);"></div>
<div class="r" style="left:2284.2px;top:2079.5px;width:126.80000000000018px;height:40.5px;background:rgb(168,216,0);"></div>
<div class="r" style="left:2410.4px;top:2079.5px;width:126.79999999999973px;height:40.5px;background:rgb(168,216,0);"></div>
<div class="r" style="left:2536.6px;top:2079.5px;width:126.80000000000018px;height:40.5px;background:rgb(168,216,0);"></div>
<div class="r" style="left:2662.8px;top:2079.5px;width:126.79999999999973px;height:40.5px;background:rgb(173,218,0);"></div>
<div class="r" style="left:2789.0px;top:2079.5px;width:126.80000000000018px;height:40.5px;background:rgb(168,216,0);"></div>
<div class="r" style="left:2915.2px;top:2079.5px;width:126.80000000000018px;height:40.5px;background:rgb(168,216,0);"></div>
<div class="r" style="left:3041.4px;top:2079.5px;width:126.79999999999973px;height:40.5px;background:rgb(168,216,0);"></div>
<div class="r" style="left:3167.6px;top:2079.5px;width:126.80000000000018px;height:40.5px;background:rgb(168,216,0);"></div>
<div class="r" style="left:3293.8px;top:2079.5px;width:126.79999999999973px;height:40.5px;background:rgb(173,218,0);"></div>
<div class="r" style="left:1527.0px;top:2119.5px;width:126.79999999999995px;height:40.5px;background:rgb(219,239,0);"></div>
<div class="r" style="left:1653.2px;top:2119.5px;width:126.79999999999995px;height:40.5px;background:rgb(252,237,0);"></div>
<div class="r" style="left:1779.4px;top:2119.5px;width:126.79999999999995px;height:40.5px;background:rgb(248,209,0);"></div>
<div class="r" style="left:1905.6px;top:2119.5px;width:126.80000000000018px;height:40.5px;background:rgb(252,232,0);"></div>
<div class="r" style="left:2031.8px;top:2119.5px;width:126.79999999999995px;height:40.5px;background:rgb(229,77,0);"></div>
<div class="r" style="left:2158.0px;top:2119.5px;width:126.80000000000018px;height:40.5px;background:rgb(252,232,0);"></div>
<div class="r" style="left:2284.2px;top:2119.5px;width:126.80000000000018px;height:40.5px;background:rgb(253,241,0);"></div>
<div class="r" style="left:2410.4px;top:2119.5px;width:126.79999999999973px;height:40.5px;background:rgb(250,253,0);"></div>
<div class="r" style="left:2536.6px;top:2119.5px;width:126.80000000000018px;height:40.5px;background:rgb(250,253,0);"></div>
<div class="r" style="left:2662.8px;top:2119.5px;width:126.79999999999973px;height:40.5px;background:rgb(240,248,0);"></div>
<div class="r" style="left:2789.0px;top:2119.5px;width:126.80000000000018px;height:40.5px;background:rgb(219,239,0);"></div>
<div class="r" style="left:2915.2px;top:2119.5px;width:126.80000000000018px;height:40.5px;background:rgb(253,241,0);"></div>
<div class="r" style="left:3041.4px;top:2119.5px;width:126.79999999999973px;height:40.5px;background:rgb(246,196,0);"></div>
<div class="r" style="left:3167.6px;top:2119.5px;width:126.80000000000018px;height:40.5px;background:rgb(253,241,0);"></div>
<div class="r" style="left:3293.8px;top:2119.5px;width:126.79999999999973px;height:40.5px;background:rgb(242,168,0);"></div>
<div class="r" style="left:1527.0px;top:2159.5px;width:126.79999999999995px;height:40.5px;background:rgb(252,232,0);"></div>
<div class="r" style="left:1653.2px;top:2159.5px;width:126.79999999999995px;height:40.5px;background:rgb(252,232,0);"></div>
<div class="r" style="left:1779.4px;top:2159.5px;width:126.79999999999995px;height:40.5px;background:rgb(235,246,0);"></div>
<div class="r" style="left:1905.6px;top:2159.5px;width:126.80000000000018px;height:40.5px;background:rgb(209,234,0);"></div>
<div class="r" style="left:2031.8px;top:2159.5px;width:126.79999999999995px;height:40.5px;background:rgb(224,241,0);"></div>
<div class="r" style="left:2158.0px;top:2159.5px;width:126.80000000000018px;height:40.5px;background:rgb(252,237,0);"></div>
<div class="r" style="left:2284.2px;top:2159.5px;width:126.80000000000018px;height:40.5px;background:rgb(217,0,0);"></div>
<div class="r" style="left:2410.4px;top:2159.5px;width:126.79999999999973px;height:40.5px;background:rgb(247,200,0);"></div>
<div class="r" style="left:2536.6px;top:2159.5px;width:126.80000000000018px;height:40.5px;background:rgb(214,237,0);"></div>
<div class="r" style="left:2662.8px;top:2159.5px;width:126.79999999999973px;height:40.5px;background:rgb(219,239,0);"></div>
<div class="r" style="left:2789.0px;top:2159.5px;width:126.80000000000018px;height:40.5px;background:rgb(248,205,0);"></div>
<div class="r" style="left:2915.2px;top:2159.5px;width:126.80000000000018px;height:40.5px;background:rgb(252,237,0);"></div>
<div class="r" style="left:3041.4px;top:2159.5px;width:126.79999999999973px;height:40.5px;background:rgb(204,232,0);"></div>
<div class="r" style="left:3167.6px;top:2159.5px;width:126.80000000000018px;height:40.5px;background:rgb(224,241,0);"></div>
<div class="r" style="left:3293.8px;top:2159.5px;width:126.79999999999973px;height:40.5px;background:rgb(255,255,0);"></div>
<div class="r" style="left:1527.0px;top:2199.5px;width:126.79999999999995px;height:40.5px;background:rgb(189,225,0);"></div>
<div class="r" style="left:1653.2px;top:2199.5px;width:126.79999999999995px;height:40.5px;background:rgb(189,225,0);"></div>
<div class="r" style="left:1779.4px;top:2199.5px;width:126.79999999999995px;height:40.5px;background:rgb(184,223,0);"></div>
<div class="r" style="left:1905.6px;top:2199.5px;width:126.80000000000018px;height:40.5px;background:rgb(184,223,0);"></div>
<div class="r" style="left:2031.8px;top:2199.5px;width:126.79999999999995px;height:40.5px;background:rgb(184,223,0);"></div>
<div class="r" style="left:2158.0px;top:2199.5px;width:126.80000000000018px;height:40.5px;background:rgb(184,223,0);"></div>
<div class="r" style="left:2284.2px;top:2199.5px;width:126.80000000000018px;height:40.5px;background:rgb(184,223,0);"></div>
<div class="r" style="left:2410.4px;top:2199.5px;width:126.79999999999973px;height:40.5px;background:rgb(184,223,0);"></div>
<div class="r" style="left:2536.6px;top:2199.5px;width:126.80000000000018px;height:40.5px;background:rgb(184,223,0);"></div>
<div class="r" style="left:2662.8px;top:2199.5px;width:126.79999999999973px;height:40.5px;background:rgb(184,223,0);"></div>
<div class="r" style="left:2789.0px;top:2199.5px;width:126.80000000000018px;height:40.5px;background:rgb(178,220,0);"></div>
<div class="r" style="left:2915.2px;top:2199.5px;width:126.80000000000018px;height:40.5px;background:rgb(184,223,0);"></div>
<div class="r" style="left:3041.4px;top:2199.5px;width:126.79999999999973px;height:40.5px;background:rgb(178,220,0);"></div>
<div class="r" style="left:3167.6px;top:2199.5px;width:126.80000000000018px;height:40.5px;background:rgb(184,223,0);"></div>
<div class="r" style="left:3293.8px;top:2199.5px;width:126.79999999999973px;height:40.5px;background:rgb(189,225,0);"></div>
<div class="r" style="left:1527.0px;top:2239.5px;width:126.79999999999995px;height:40.5px;background:rgb(107,188,0);"></div>
<div class="r" style="left:1653.2px;top:2239.5px;width:126.79999999999995px;height:40.5px;background:rgb(107,188,0);"></div>
<div class="r" style="left:1779.4px;top:2239.5px;width:126.79999999999995px;height:40.5px;background:rgb(107,188,0);"></div>
<div class="r" style="left:1905.6px;top:2239.5px;width:126.80000000000018px;height:40.5px;background:rgb(112,191,0);"></div>
<div class="r" style="left:2031.8px;top:2239.5px;width:126.79999999999995px;height:40.5px;background:rgb(107,188,0);"></div>
<div class="r" style="left:2158.0px;top:2239.5px;width:126.80000000000018px;height:40.5px;background:rgb(107,188,0);"></div>
<div class="r" style="left:2284.2px;top:2239.5px;width:126.80000000000018px;height:40.5px;background:rgb(107,188,0);"></div>
<div class="r" style="left:2410.4px;top:2239.5px;width:126.79999999999973px;height:40.5px;background:rgb(122,195,0);"></div>
<div class="r" style="left:2536.6px;top:2239.5px;width:126.80000000000018px;height:40.5px;background:rgb(117,193,0);"></div>
<div class="r" style="left:2662.8px;top:2239.5px;width:126.79999999999973px;height:40.5px;background:rgb(122,195,0);"></div>
<div class="r" style="left:2789.0px;top:2239.5px;width:126.80000000000018px;height:40.5px;background:rgb(117,193,0);"></div>
<div class="r" style="left:2915.2px;top:2239.5px;width:126.80000000000018px;height:40.5px;background:rgb(143,204,0);"></div>
<div class="r" style="left:3041.4px;top:2239.5px;width:126.79999999999973px;height:40.5px;background:rgb(117,193,0);"></div>
<div class="r" style="left:3167.6px;top:2239.5px;width:126.80000000000018px;height:40.5px;background:rgb(128,198,0);"></div>
<div class="r" style="left:3293.8px;top:2239.5px;width:126.79999999999973px;height:40.5px;background:rgb(107,188,0);"></div>
<div class="r" style="left:1527.0px;top:2279.5px;width:126.79999999999995px;height:40.5px;background:rgb(143,204,0);"></div>
<div class="r" style="left:1653.2px;top:2279.5px;width:126.79999999999995px;height:40.5px;background:rgb(143,204,0);"></div>
<div class="r" style="left:1779.4px;top:2279.5px;width:126.79999999999995px;height:40.5px;background:rgb(143,204,0);"></div>
<div class="r" style="left:1905.6px;top:2279.5px;width:126.80000000000018px;height:40.5px;background:rgb(138,202,0);"></div>
<div class="r" style="left:2031.8px;top:2279.5px;width:126.79999999999995px;height:40.5px;background:rgb(138,202,0);"></div>
<div class="r" style="left:2158.0px;top:2279.5px;width:126.80000000000018px;height:40.5px;background:rgb(138,202,0);"></div>
<div class="r" style="left:2284.2px;top:2279.5px;width:126.80000000000018px;height:40.5px;background:rgb(138,202,0);"></div>
<div class="r" style="left:2410.4px;top:2279.5px;width:126.79999999999973px;height:40.5px;background:rgb(143,204,0);"></div>
<div class="r" style="left:2536.6px;top:2279.5px;width:126.80000000000018px;height:40.5px;background:rgb(143,204,0);"></div>
<div class="r" style="left:2662.8px;top:2279.5px;width:126.79999999999973px;height:40.5px;background:rgb(138,202,0);"></div>
<div class="r" style="left:2789.0px;top:2279.5px;width:126.80000000000018px;height:40.5px;background:rgb(138,202,0);"></div>
<div class="r" style="left:2915.2px;top:2279.5px;width:126.80000000000018px;height:40.5px;background:rgb(143,204,0);"></div>
<div class="r" style="left:3041.4px;top:2279.5px;width:126.79999999999973px;height:40.5px;background:rgb(143,204,0);"></div>
<div class="r" style="left:3167.6px;top:2279.5px;width:126.80000000000018px;height:40.5px;background:rgb(143,204,0);"></div>
<div class="r" style="left:3293.8px;top:2279.5px;width:126.79999999999973px;height:40.5px;background:rgb(138,202,0);"></div>
<svg width="3700" height="2706" style="left:0;top:0;z-index:2"><polygon points="57,28 77.9,39.4 77.9,64.1 57,75.8 36.2,64.1 36.2,39.4" fill="none" stroke="#ffffff" stroke-width="2.6" stroke-linejoin="round"/><polyline points="36.2,39.4 57,51 77.9,39.4" fill="none" stroke="#ffffff" stroke-width="2.5"/><line x1="57" y1="51" x2="57" y2="75.8" stroke="#ffffff" stroke-width="2.5"/><line x1="57" y1="29" x2="57" y2="50" stroke="#a0a0a0" stroke-width="1.4"/><g fill="none" stroke="#f0f0f0" stroke-width="1.3"><polygon points="57,37.8 64.9,42.3 57,46.7 48.9,42.3"/><polygon points="44.5,50.7 52.5,54.3 52.5,63.4 44.5,59.05"/><polygon points="69.6,50.7 61.6,54.3 61.6,63.4 69.6,59.05"/><line x1="36.2" y1="39.4" x2="48.9" y2="42.3"/><line x1="77.9" y1="39.4" x2="64.9" y2="42.3"/><line x1="36.2" y1="39.4" x2="44.5" y2="50.7"/><line x1="36.2" y1="64.1" x2="44.5" y2="59.05"/><line x1="57" y1="75.8" x2="52.5" y2="63.4"/><line x1="77.9" y1="39.4" x2="69.6" y2="50.7"/><line x1="77.9" y1="64.1" x2="69.6" y2="59.05"/><line x1="57" y1="75.8" x2="61.6" y2="63.4"/><line x1="44.5" y1="59.05" x2="52.5" y2="54.3"/><line x1="69.6" y1="59.05" x2="61.6" y2="54.3"/></g><circle cx="48" cy="171.2" r="14.2" fill="#ffffff"/><circle cx="41.89" cy="165.09" r="1.70" fill="#0d6efd"/><circle cx="54.39" cy="165.09" r="1.70" fill="#0d6efd"/><circle cx="39.20" cy="171.20" r="1.70" fill="#0d6efd"/><circle cx="57.23" cy="171.20" r="1.70" fill="#0d6efd"/><rect x="46.82" y="161.26" width="2.36" height="15.62" rx="1.18" fill="#0d6efd"/><circle cx="48" cy="176.88" r="3.48" fill="#0d6efd"/><rect x="34" y="233.30" width="28" height="10.71" rx="3.00" fill="#6ea8fe"/><circle cx="51.22" cy="238.65" r="1.26" fill="#2b3035"/><circle cx="54.86" cy="238.65" r="1.26" fill="#2b3035"/><rect x="34" y="247.09" width="28" height="10.71" rx="3.00" fill="#6ea8fe"/><circle cx="51.22" cy="252.45" r="1.26" fill="#2b3035"/><circle cx="54.86" cy="252.45" r="1.26" fill="#2b3035"/><polygon points="46.3,305.7 53.8,314.5 51.2,314.5 56.8,322.5 54.2,322.5 58.6,330.2 48.1,330.2 48.1,332.3 47.4,333.5 45.2,333.5 44.5,332.3 44.5,330.2 34,330.2 38.4,322.5 35.8,322.5 41.4,314.5 38.8,314.5" fill="#6ea8fe" stroke="#6ea8fe" stroke-width="1" stroke-linejoin="round"/><path d="M34,383.5 Q41,381 48.5,382.5 L48.5,405.4 Q41,403.5 34,405 Z M51.5,382.5 Q59,381 66,383.5 L66,405 Q59,403.5 51.5,405.4 Z" fill="#6ea8fe"/><path d="M48.2,455.8 Q49.3,455.8 50,457 L62,478 Q62.5,480 60.5,480 L35.8,480 Q33.8,480 34.4,478 L46.4,457 Q47.1,455.8 48.2,455.8 Z" fill="#6ea8fe"/><rect x="46.7" y="463" width="3" height="9" rx="1.5" fill="#2b3035"/><circle cx="48.2" cy="475.6" r="1.9" fill="#2b3035"/><circle cx="46.3" cy="534.6" r="7.1" fill="#6ea8fe"/><path d="M34,555.8 Q34,543.8 43,543.8 L49.6,543.8 Q58.6,543.8 58.6,555.8 Z" fill="#6ea8fe"/><path d="M37,604 L51.5,601.2 L51.5,627 L34,627 Q33.8,630 35.5,630 L51.5,630 L51.5,627 L37,627 Z" fill="#6ea8fe"/><circle cx="46.6" cy="615.4" r="1.6" fill="#2b3035"/><path d="M53.5,606.8 L60.5,606.8 L60.5,628.2 L65.3,628.2" stroke="#6ea8fe" stroke-width="4" fill="none" stroke-linejoin="round" stroke-linecap="round"/><path d="M41.5,711.2 A16,16 0 1 0 58.6,734.8 A15.5,15.5 0 0 1 41.5,711.2 Z" fill="#ffffff"/><polygon points="49.30,718.00 50.51,722.29 54.80,723.50 50.51,724.71 49.30,729.00 48.09,724.71 43.80,723.50 48.09,722.29" fill="#ffffff"/><polygon points="56.20,712.00 57.04,714.96 60.00,715.80 57.04,716.64 56.20,719.60 55.36,716.64 52.40,715.80 55.36,714.96" fill="#ffffff"/><polygon points="68.6,721.4 86,721.4 77.3,731" fill="#ffffff"/><polygon points="3090,44.7 3108,44.7 3099,54" fill="#ffffff"/><rect x="3658" y="23.7" width="6" height="13" rx="3" fill="#008000"/><rect x="3676" y="23.7" width="6" height="13" rx="3" fill="#008000"/><rect x="3652" y="38.8" width="36" height="6" rx="3" fill="#008000"/><path d="M3655,43 L3685,43 L3685,49 A15,14.5 0 0 1 3655,49 Z" fill="#008000"/><rect x="3667" y="58" width="6" height="14" rx="3" fill="#008000"/><path d="M1443.5,149.5 L1450,156.5 L1456.5,149.5" stroke="#ffffff" stroke-width="2.6" fill="none" stroke-linecap="round" stroke-linejoin="round"/><circle cx="916" cy="235.9" r="20.2" fill="#dee2e6"/><circle cx="907.31" cy="227.21" r="2.42" fill="#212529"/><circle cx="925.09" cy="227.21" r="2.42" fill="#212529"/><circle cx="903.48" cy="235.90" r="2.42" fill="#212529"/><circle cx="929.13" cy="235.90" r="2.42" fill="#212529"/><rect x="914.32" y="221.76" width="3.35" height="22.22" rx="1.68" fill="#212529"/><circle cx="916" cy="243.98" r="4.95" fill="#212529"/><circle cx="916.1" cy="886" r="20.2" fill="#dee2e6"/><path d="M916.3,874.8 L916.3,885.8 L923.8,891" stroke="#212529" stroke-width="3.6" fill="none" stroke-linecap="round" stroke-linejoin="round"/><rect x="896" y="1516" width="30.4" height="5.2" rx="2.6" fill="#dee2e6"/><rect x="896" y="1551.1" width="30.4" height="5.2" rx="2.6" fill="#dee2e6"/><path d="M899.5,1519 L899.5,1523 Q899.5,1530 911.2,1536.2 Q922.9,1530 922.9,1523 L922.9,1519 L918.5,1519 L918.5,1523 Q918.5,1528 911.2,1531.5 Q903.9,1528 903.9,1523 L903.9,1519 Z" fill="#dee2e6"/><path d="M899.5,1553 L899.5,1549 Q899.5,1542 911.2,1536.2 Q922.9,1542 922.9,1549 L922.9,1553 L918.5,1553 L918.5,1549 Q918.5,1544 911.2,1540.5 Q903.9,1544 903.9,1549 L903.9,1553 Z" fill="#dee2e6"/><rect x="1148" y="408" width="2020" height="2" fill="#484753"/><rect x="1148" y="448" width="2020" height="2" fill="#484753"/><rect x="1148" y="488" width="2020" height="2" fill="#484753"/><rect x="1148" y="528" width="2020" height="2" fill="#484753"/><rect x="1148" y="568" width="2020" height="2" fill="#484753"/><rect x="1148" y="648" width="2020" height="2" fill="#484753"/><path d="M1148.0,546.1 L1151.7,543.6 L1155.4,542.1 L1159.1,539.0 L1162.8,541.8 L1166.5,540.5 L1170.2,537.5 L1173.9,541.0 L1177.7,538.0 L1181.4,537.3 L1185.1,537.8 L1188.8,532.3 L1192.5,529.0 L1196.2,533.5 L1199.9,533.7 L1203.6,526.4 L1207.3,524.7 L1211.0,529.8 L1214.7,530.0 L1218.4,532.3 L1222.1,529.1 L1225.8,524.9 L1229.5,535.8 L1233.2,538.4 L1237.0,532.0 L1240.7,544.5 L1244.4,525.9 L1248.1,540.7 L1251.8,536.7 L1255.5,544.0 L1259.2,539.6 L1262.9,542.7 L1266.6,539.3 L1270.3,544.5 L1274.0,536.3 L1277.7,544.7 L1281.4,537.0 L1285.1,538.3 L1288.8,550.0 L1292.6,541.6 L1296.3,548.8 L1300.0,543.5 L1303.7,544.3 L1307.4,535.0 L1311.1,538.7 L1314.8,542.4 L1318.5,541.0 L1322.2,539.8 L1325.9,538.3 L1329.6,510.4 L1333.3,497.6 L1337.0,497.7 L1340.7,531.8 L1344.4,534.1 L1348.1,529.2 L1351.9,529.7 L1355.6,530.7 L1359.3,531.7 L1363.0,531.3 L1366.7,533.0 L1370.4,536.0 L1374.1,532.8 L1377.8,533.5 L1381.5,534.8 L1385.2,533.9 L1388.9,532.7 L1392.6,532.7 L1396.3,531.6 L1400.0,531.8 L1403.7,533.9 L1407.4,521.5 L1411.2,538.6 L1414.9,528.4 L1418.6,538.0 L1422.3,536.7 L1426.0,512.8 L1429.7,530.5 L1433.4,531.1 L1437.1,534.0 L1440.8,537.9 L1444.5,536.4 L1448.2,529.8 L1451.9,532.6 L1455.6,533.9 L1459.3,534.8 L1463.0,521.7 L1466.8,527.4 L1470.5,532.0 L1474.2,527.9 L1477.9,522.8 L1481.6,518.2 L1485.3,528.0 L1489.0,513.1 L1492.7,524.5 L1496.4,522.7 L1500.1,518.9 L1503.8,513.7 L1507.5,517.2 L1511.2,519.8 L1514.9,513.2 L1518.6,516.0 L1522.3,508.6 L1526.1,508.3 L1529.8,519.5 L1533.5,519.4 L1537.2,518.9 L1540.9,520.1 L1544.6,517.1 L1548.3,523.3 L1552.0,513.8 L1555.7,523.3 L1559.4,524.7 L1563.1,530.9 L1566.8,533.1 L1570.5,526.6 L1574.2,514.1 L1577.9,531.2 L1581.7,525.2 L1585.4,522.9 L1589.1,506.0 L1592.8,524.3 L1596.5,523.6 L1600.2,508.2 L1603.9,527.5 L1607.6,522.9 L1611.3,524.0 L1615.0,522.3 L1618.7,525.7 L1622.4,527.1 L1626.1,528.7 L1629.8,525.6 L1633.5,526.1 L1637.2,527.6 L1641.0,525.9 L1644.7,508.9 L1648.4,525.7 L1652.1,529.9 L1655.8,530.7 L1659.5,524.6 L1663.2,522.0 L1666.9,531.6 L1670.6,524.6 L1674.3,526.7 L1678.0,527.7 L1681.7,510.4 L1685.4,524.6 L1689.1,523.3 L1692.8,523.5 L1696.6,525.9 L1700.3,529.6 L1704.0,535.6 L1707.7,535.2 L1711.4,528.4 L1715.1,522.4 L1718.8,527.3 L1722.5,528.6 L1726.2,527.9 L1729.9,530.3 L1733.6,530.6 L1737.3,526.7 L1741.0,531.5 L1744.7,522.3 L1748.4,527.5 L1752.1,520.5 L1755.9,508.1 L1759.6,520.4 L1763.3,525.8 L1767.0,520.9 L1770.7,521.8 L1774.4,520.1 L1778.1,522.3 L1781.8,498.8 L1785.5,518.0 L1789.2,519.7 L1792.9,517.3 L1796.6,521.0 L1800.3,514.9 L1804.0,514.2 L1807.7,505.4 L1811.4,498.9 L1815.2,510.0 L1818.9,511.6 L1822.6,502.7 L1826.3,508.3 L1830.0,509.8 L1833.7,508.8 L1837.4,494.0 L1841.1,507.4 L1844.8,511.6 L1848.5,463.1 L1852.2,510.1 L1855.9,489.9 L1859.6,508.6 L1863.3,503.4 L1867.0,508.8 L1870.8,504.1 L1874.5,500.5 L1878.2,505.4 L1881.9,507.4 L1885.6,501.7 L1889.3,492.9 L1893.0,499.3 L1896.7,502.6 L1900.4,504.2 L1904.1,474.3 L1907.8,498.0 L1911.5,485.8 L1915.2,495.9 L1918.9,497.2 L1922.6,498.3 L1926.3,492.0 L1930.1,487.1 L1933.8,493.8 L1937.5,472.7 L1941.2,491.9 L1944.9,476.8 L1948.6,464.4 L1952.3,487.3 L1956.0,485.2 L1959.7,478.1 L1963.4,487.7 L1967.1,484.9 L1970.8,478.8 L1974.5,463.1 L1978.2,492.4 L1981.9,490.1 L1985.7,485.3 L1989.4,463.7 L1993.1,480.8 L1996.8,474.7 L2000.5,478.9 L2004.2,475.5 L2007.9,459.5 L2011.6,458.1 L2015.3,467.9 L2019.0,457.5 L2022.7,442.3 L2026.4,458.0 L2030.1,449.4 L2033.8,458.7 L2037.5,446.8 L2041.2,449.9 L2045.0,455.1 L2048.7,460.9 L2052.4,461.8 L2056.1,452.2 L2059.8,437.4 L2063.5,454.2 L2067.2,458.2 L2070.9,459.5 L2074.6,455.5 L2078.3,456.1 L2082.0,453.6 L2085.7,431.2 L2089.4,442.9 L2093.1,450.7 L2096.8,456.2 L2100.6,438.3 L2104.3,451.2 L2108.0,435.3 L2111.7,445.8 L2115.4,441.0 L2119.1,419.1 L2122.8,436.5 L2126.5,446.8 L2130.2,447.3 L2133.9,417.3 L2137.6,441.9 L2141.3,440.4 L2145.0,443.7 L2148.7,440.1 L2152.4,429.5 L2156.1,438.2 L2159.9,449.7 L2163.6,445.4 L2167.3,446.5 L2171.0,419.9 L2174.7,452.0 L2178.4,455.8 L2182.1,447.2 L2185.8,456.1 L2189.5,433.1 L2193.2,453.9 L2196.9,449.5 L2200.6,435.9 L2204.3,448.4 L2208.0,450.8 L2211.7,452.0 L2215.4,440.7 L2219.2,453.8 L2222.9,447.6 L2226.6,451.3 L2230.3,452.2 L2234.0,452.5 L2237.7,454.1 L2241.4,444.3 L2245.1,453.4 L2248.8,455.9 L2252.5,448.4 L2256.2,451.9 L2259.9,450.6 L2263.6,453.7 L2267.3,429.1 L2271.0,451.1 L2274.8,453.4 L2278.5,443.7 L2282.2,454.4 L2285.9,455.6 L2289.6,459.1 L2293.3,456.0 L2297.0,456.6 L2300.7,452.5 L2304.4,447.7 L2308.1,453.6 L2311.8,452.8 L2315.5,460.8 L2319.2,462.0 L2322.9,461.7 L2326.6,465.9 L2330.3,467.8 L2334.1,471.2 L2337.8,473.2 L2341.5,465.1 L2345.2,462.6 L2348.9,461.8 L2352.6,461.9 L2356.3,460.6 L2360.0,463.0 L2363.7,454.0 L2367.4,460.5 L2371.1,464.2 L2374.8,455.9 L2378.5,461.8 L2382.2,458.5 L2385.9,463.3 L2389.7,460.0 L2393.4,464.7 L2397.1,465.6 L2400.8,468.5 L2404.5,469.0 L2408.2,473.2 L2411.9,480.0 L2415.6,484.6 L2419.3,482.2 L2423.0,485.8 L2426.7,482.5 L2430.4,489.3 L2434.1,483.7 L2437.8,493.2 L2441.5,496.2 L2445.2,477.4 L2449.0,490.0 L2452.7,488.8 L2456.4,490.0 L2460.1,490.8 L2463.8,479.3 L2467.5,495.5 L2471.2,513.2 L2474.9,514.7 L2478.6,507.7 L2482.3,508.1 L2486.0,507.7 L2489.7,514.8 L2493.4,511.1 L2497.1,517.1 L2500.8,506.3 L2504.6,521.7 L2508.3,506.6 L2512.0,518.1 L2515.7,522.7 L2519.4,511.2 L2523.1,529.3 L2526.8,527.5 L2530.5,518.7 L2534.2,531.7 L2537.9,531.9 L2541.6,527.1 L2545.3,541.3 L2549.0,494.2 L2552.7,537.2 L2556.4,538.8 L2560.1,541.8 L2563.9,535.8 L2567.6,535.2 L2571.3,527.5 L2575.0,538.6 L2578.7,526.7 L2582.4,550.7 L2586.1,539.3 L2589.8,549.5 L2593.5,548.1 L2597.2,547.0 L2600.9,548.6 L2604.6,533.6 L2608.3,531.8 L2612.0,541.8 L2615.7,538.3 L2619.4,546.0 L2623.2,548.2 L2626.9,544.1 L2630.6,543.7 L2634.3,542.3 L2638.0,540.9 L2641.7,546.0 L2645.4,535.7 L2649.1,555.7 L2652.8,545.3 L2656.5,554.5 L2660.2,552.2 L2663.9,542.6 L2667.6,515.2 L2671.3,555.6 L2675.0,550.7 L2678.8,556.9 L2682.5,558.2 L2686.2,554.6 L2689.9,555.0 L2693.6,551.1 L2697.3,555.7 L2701.0,562.2 L2704.7,560.0 L2708.4,559.9 L2712.1,548.1 L2715.8,548.4 L2719.5,556.4 L2723.2,544.4 L2726.9,555.8 L2730.6,546.8 L2734.3,540.7 L2738.1,555.6 L2741.8,551.6 L2745.5,549.1 L2749.2,551.9 L2752.9,552.2 L2756.6,554.0 L2760.3,554.8 L2764.0,558.2 L2767.7,557.8 L2771.4,566.7 L2775.1,553.2 L2778.8,552.6 L2782.5,558.3 L2786.2,564.1 L2789.9,553.3 L2793.7,549.7 L2797.4,554.8 L2801.1,556.7 L2804.8,550.8 L2808.5,536.1 L2812.2,550.9 L2815.9,560.5 L2819.6,552.9 L2823.3,559.8 L2827.0,561.5 L2830.7,564.8 L2834.4,558.9 L2838.1,556.0 L2841.8,564.0 L2845.5,565.5 L2849.2,566.7 L2853.0,560.2 L2856.7,569.0 L2860.4,565.3 L2864.1,550.3 L2867.8,565.1 L2871.5,559.9 L2875.2,559.9 L2878.9,564.5 L2882.6,563.6 L2886.3,558.2 L2890.0,537.1 L2893.7,553.8 L2897.4,552.2 L2901.1,538.7 L2904.8,548.0 L2908.6,551.1 L2912.3,552.9 L2916.0,547.3 L2919.7,558.4 L2923.4,530.0 L2927.1,543.7 L2930.8,553.0 L2934.5,551.9 L2938.2,547.0 L2941.9,558.0 L2945.6,552.2 L2949.3,559.2 L2953.0,558.8 L2956.7,565.4 L2960.4,562.3 L2964.1,555.8 L2967.9,553.6 L2971.6,555.2 L2975.3,553.7 L2979.0,556.4 L2982.7,562.2 L2986.4,565.2 L2990.1,551.9 L2993.8,549.6 L2997.5,562.4 L3001.2,556.6 L3004.9,565.5 L3008.6,562.4 L3012.3,548.4 L3016.0,568.2 L3019.7,563.2 L3023.4,555.9 L3027.2,559.7 L3030.9,562.3 L3034.6,556.9 L3038.3,554.9 L3042.0,538.9 L3045.7,552.7 L3049.4,542.6 L3053.1,540.0 L3056.8,546.2 L3060.5,543.2 L3064.2,547.5 L3067.9,545.1 L3071.6,541.7 L3075.3,540.0 L3079.0,542.0 L3082.8,538.6 L3086.5,535.0 L3090.2,529.7 L3093.9,541.3 L3097.6,545.9 L3101.3,534.7 L3105.0,548.8 L3108.7,539.9 L3112.4,544.5 L3116.1,546.5 L3119.8,538.6 L3123.5,545.5 L3127.2,547.5 L3130.9,539.8 L3134.6,536.4 L3138.3,534.9 L3142.1,535.8 L3145.8,541.5 L3149.5,541.9 L3153.2,511.0 L3156.9,544.7 L3160.6,546.2 L3164.3,545.7 L3168.0,545.8 L3168.0,579.5 L3164.3,581.9 L3160.6,588.9 L3156.9,583.7 L3153.2,577.1 L3149.5,583.8 L3145.8,573.5 L3142.1,577.5 L3138.3,574.2 L3134.6,578.0 L3130.9,580.4 L3127.2,581.9 L3123.5,586.6 L3119.8,581.8 L3116.1,585.5 L3112.4,585.5 L3108.7,583.3 L3105.0,588.3 L3101.3,584.2 L3097.6,586.9 L3093.9,587.0 L3090.2,585.0 L3086.5,583.4 L3082.8,578.6 L3079.0,581.7 L3075.3,581.7 L3071.6,578.9 L3067.9,589.0 L3064.2,581.8 L3060.5,588.3 L3056.8,584.2 L3053.1,582.6 L3049.4,584.9 L3045.7,589.0 L3042.0,590.7 L3038.3,589.0 L3034.6,593.0 L3030.9,589.4 L3027.2,588.4 L3023.4,588.2 L3019.7,589.1 L3016.0,592.2 L3012.3,592.0 L3008.6,594.7 L3004.9,594.2 L3001.2,588.4 L2997.5,593.5 L2993.8,588.3 L2990.1,583.3 L2986.4,586.3 L2982.7,585.5 L2979.0,588.6 L2975.3,591.0 L2971.6,588.1 L2967.9,583.5 L2964.1,585.8 L2960.4,592.7 L2956.7,587.9 L2953.0,584.2 L2949.3,580.2 L2945.6,581.6 L2941.9,578.1 L2938.2,584.2 L2934.5,579.8 L2930.8,587.4 L2927.1,579.1 L2923.4,580.8 L2919.7,585.7 L2916.0,580.6 L2912.3,583.3 L2908.6,582.7 L2904.8,576.0 L2901.1,586.5 L2897.4,585.1 L2893.7,590.6 L2890.0,583.6 L2886.3,582.8 L2882.6,585.6 L2878.9,595.0 L2875.2,589.5 L2871.5,591.2 L2867.8,592.5 L2864.1,590.0 L2860.4,590.0 L2856.7,590.0 L2853.0,587.3 L2849.2,593.9 L2845.5,592.5 L2841.8,588.9 L2838.1,591.6 L2834.4,590.0 L2830.7,593.3 L2827.0,589.4 L2823.3,593.6 L2819.6,583.8 L2815.9,590.3 L2812.2,586.0 L2808.5,590.3 L2804.8,588.1 L2801.1,587.3 L2797.4,586.7 L2793.7,586.5 L2789.9,588.0 L2786.2,589.7 L2782.5,590.2 L2778.8,592.9 L2775.1,590.2 L2771.4,591.9 L2767.7,588.7 L2764.0,586.4 L2760.3,591.2 L2756.6,585.9 L2752.9,585.0 L2749.2,583.5 L2745.5,600.8 L2741.8,580.9 L2738.1,589.9 L2734.3,589.2 L2730.6,586.1 L2726.9,583.8 L2723.2,589.6 L2719.5,588.9 L2715.8,589.4 L2712.1,586.7 L2708.4,589.0 L2704.7,589.9 L2701.0,589.3 L2697.3,589.3 L2693.6,587.0 L2689.9,588.7 L2686.2,587.2 L2682.5,588.0 L2678.8,582.6 L2675.0,588.8 L2671.3,585.2 L2667.6,585.7 L2663.9,586.4 L2660.2,581.5 L2656.5,590.1 L2652.8,582.6 L2649.1,580.3 L2645.4,581.4 L2641.7,581.7 L2638.0,576.8 L2634.3,596.6 L2630.6,577.2 L2626.9,579.8 L2623.2,591.9 L2619.4,581.0 L2615.7,576.3 L2612.0,577.1 L2608.3,582.2 L2604.6,579.3 L2600.9,579.6 L2597.2,580.1 L2593.5,578.0 L2589.8,576.3 L2586.1,582.8 L2582.4,580.2 L2578.7,575.3 L2575.0,578.6 L2571.3,576.7 L2567.6,577.4 L2563.9,580.1 L2560.1,581.3 L2556.4,573.8 L2552.7,580.3 L2549.0,576.0 L2545.3,572.9 L2541.6,576.5 L2537.9,574.4 L2534.2,577.8 L2530.5,583.9 L2526.8,576.5 L2523.1,566.3 L2519.4,566.4 L2515.7,570.7 L2512.0,565.6 L2508.3,563.2 L2504.6,563.7 L2500.8,570.7 L2497.1,561.5 L2493.4,560.2 L2489.7,562.3 L2486.0,560.4 L2482.3,557.7 L2478.6,558.8 L2474.9,559.9 L2471.2,555.1 L2467.5,552.7 L2463.8,550.8 L2460.1,550.7 L2456.4,543.4 L2452.7,544.2 L2449.0,544.2 L2445.2,550.8 L2441.5,545.1 L2437.8,544.0 L2434.1,536.6 L2430.4,544.2 L2426.7,543.3 L2423.0,536.6 L2419.3,537.0 L2415.6,536.4 L2411.9,532.6 L2408.2,538.1 L2404.5,533.7 L2400.8,521.5 L2397.1,538.1 L2393.4,530.6 L2389.7,523.2 L2385.9,516.0 L2382.2,514.3 L2378.5,517.1 L2374.8,513.5 L2371.1,516.0 L2367.4,519.6 L2363.7,521.4 L2360.0,523.1 L2356.3,520.6 L2352.6,523.7 L2348.9,522.7 L2345.2,521.7 L2341.5,521.1 L2337.8,520.5 L2334.1,521.6 L2330.3,520.6 L2326.6,520.9 L2322.9,521.9 L2319.2,518.9 L2315.5,513.6 L2311.8,521.1 L2308.1,522.1 L2304.4,513.6 L2300.7,512.6 L2297.0,510.7 L2293.3,517.2 L2289.6,514.2 L2285.9,515.1 L2282.2,512.9 L2278.5,511.7 L2274.8,509.5 L2271.0,510.8 L2267.3,519.7 L2263.6,502.9 L2259.9,511.6 L2256.2,506.0 L2252.5,510.5 L2248.8,511.7 L2245.1,514.3 L2241.4,516.2 L2237.7,515.5 L2234.0,521.9 L2230.3,511.0 L2226.6,512.5 L2222.9,515.0 L2219.2,520.6 L2215.4,516.6 L2211.7,516.1 L2208.0,511.9 L2204.3,514.6 L2200.6,512.5 L2196.9,510.0 L2193.2,519.3 L2189.5,514.4 L2185.8,511.9 L2182.1,517.8 L2178.4,512.6 L2174.7,518.4 L2171.0,523.6 L2167.3,513.0 L2163.6,508.5 L2159.9,511.7 L2156.1,503.9 L2152.4,504.6 L2148.7,504.9 L2145.0,505.3 L2141.3,506.5 L2137.6,511.6 L2133.9,513.4 L2130.2,509.6 L2126.5,514.1 L2122.8,519.1 L2119.1,523.1 L2115.4,518.0 L2111.7,518.7 L2108.0,520.3 L2104.3,522.1 L2100.6,529.5 L2096.8,519.1 L2093.1,523.2 L2089.4,533.1 L2085.7,531.7 L2082.0,520.3 L2078.3,519.5 L2074.6,522.8 L2070.9,522.0 L2067.2,525.1 L2063.5,518.7 L2059.8,519.1 L2056.1,515.4 L2052.4,520.0 L2048.7,512.7 L2045.0,514.2 L2041.2,513.1 L2037.5,517.9 L2033.8,527.0 L2030.1,521.1 L2026.4,518.8 L2022.7,532.9 L2019.0,524.9 L2015.3,534.6 L2011.6,531.7 L2007.9,533.1 L2004.2,535.0 L2000.5,543.6 L1996.8,541.3 L1993.1,552.7 L1989.4,544.0 L1985.7,547.7 L1981.9,546.4 L1978.2,546.6 L1974.5,545.8 L1970.8,547.2 L1967.1,547.2 L1963.4,544.2 L1959.7,542.4 L1956.0,550.8 L1952.3,544.1 L1948.6,540.9 L1944.9,546.0 L1941.2,547.0 L1937.5,545.8 L1933.8,555.2 L1930.1,556.5 L1926.3,547.1 L1922.6,552.2 L1918.9,553.6 L1915.2,556.7 L1911.5,553.7 L1907.8,556.8 L1904.1,553.7 L1900.4,554.2 L1896.7,558.5 L1893.0,560.0 L1889.3,557.2 L1885.6,558.4 L1881.9,558.9 L1878.2,553.5 L1874.5,547.9 L1870.8,550.1 L1867.0,557.5 L1863.3,558.1 L1859.6,552.9 L1855.9,566.2 L1852.2,557.8 L1848.5,556.5 L1844.8,558.6 L1841.1,556.4 L1837.4,571.7 L1833.7,555.7 L1830.0,556.1 L1826.3,562.5 L1822.6,558.9 L1818.9,576.3 L1815.2,559.3 L1811.4,559.2 L1807.7,562.2 L1804.0,560.2 L1800.3,566.5 L1796.6,564.0 L1792.9,566.4 L1789.2,564.1 L1785.5,563.1 L1781.8,558.5 L1778.1,567.6 L1774.4,567.3 L1770.7,571.7 L1767.0,566.9 L1763.3,569.3 L1759.6,572.6 L1755.9,564.5 L1752.1,568.1 L1748.4,575.4 L1744.7,572.1 L1741.0,575.4 L1737.3,576.1 L1733.6,576.0 L1729.9,573.4 L1726.2,574.0 L1722.5,576.7 L1718.8,568.8 L1715.1,574.7 L1711.4,574.8 L1707.7,572.2 L1704.0,576.1 L1700.3,574.5 L1696.6,572.9 L1692.8,573.7 L1689.1,576.0 L1685.4,575.9 L1681.7,573.4 L1678.0,577.7 L1674.3,574.0 L1670.6,567.1 L1666.9,571.9 L1663.2,572.3 L1659.5,575.3 L1655.8,569.2 L1652.1,571.0 L1648.4,567.3 L1644.7,574.9 L1641.0,574.9 L1637.2,572.8 L1633.5,571.8 L1629.8,579.1 L1626.1,570.2 L1622.4,572.8 L1618.7,565.5 L1615.0,566.8 L1611.3,575.2 L1607.6,569.1 L1603.9,570.9 L1600.2,571.2 L1596.5,566.4 L1592.8,565.6 L1589.1,570.1 L1585.4,568.6 L1581.7,569.8 L1577.9,571.9 L1574.2,570.8 L1570.5,568.9 L1566.8,569.4 L1563.1,571.4 L1559.4,568.6 L1555.7,566.6 L1552.0,581.7 L1548.3,566.6 L1544.6,563.8 L1540.9,566.1 L1537.2,570.9 L1533.5,579.8 L1529.8,571.8 L1526.1,568.4 L1522.3,565.1 L1518.6,570.7 L1514.9,568.0 L1511.2,566.7 L1507.5,565.6 L1503.8,571.8 L1500.1,568.4 L1496.4,569.1 L1492.7,571.4 L1489.0,572.3 L1485.3,574.3 L1481.6,577.8 L1477.9,580.5 L1474.2,575.1 L1470.5,572.9 L1466.8,583.8 L1463.0,575.7 L1459.3,574.7 L1455.6,574.3 L1451.9,573.5 L1448.2,577.3 L1444.5,573.6 L1440.8,579.4 L1437.1,581.0 L1433.4,574.2 L1429.7,576.6 L1426.0,578.0 L1422.3,571.0 L1418.6,577.3 L1414.9,578.6 L1411.2,576.2 L1407.4,575.4 L1403.7,573.2 L1400.0,575.5 L1396.3,574.3 L1392.6,578.9 L1388.9,575.9 L1385.2,576.5 L1381.5,578.0 L1377.8,575.7 L1374.1,579.0 L1370.4,571.8 L1366.7,577.1 L1363.0,568.1 L1359.3,574.6 L1355.6,573.4 L1351.9,574.9 L1348.1,578.8 L1344.4,572.7 L1340.7,570.6 L1337.0,588.2 L1333.3,582.7 L1329.6,578.8 L1325.9,577.5 L1322.2,577.0 L1318.5,579.2 L1314.8,580.8 L1311.1,583.9 L1307.4,582.3 L1303.7,582.6 L1300.0,585.5 L1296.3,586.4 L1292.6,583.8 L1288.8,583.5 L1285.1,582.6 L1281.4,586.9 L1277.7,585.2 L1274.0,578.1 L1270.3,587.0 L1266.6,582.9 L1262.9,579.5 L1259.2,580.4 L1255.5,582.5 L1251.8,576.0 L1248.1,578.5 L1244.4,581.2 L1240.7,575.0 L1237.0,573.6 L1233.2,572.5 L1229.5,569.0 L1225.8,575.9 L1222.1,574.3 L1218.4,568.6 L1214.7,575.2 L1211.0,572.1 L1207.3,571.6 L1203.6,574.2 L1199.9,575.0 L1196.2,579.0 L1192.5,585.7 L1188.8,576.4 L1185.1,574.2 L1181.4,575.2 L1177.7,580.4 L1173.9,575.6 L1170.2,576.0 L1166.5,574.8 L1162.8,582.7 L1159.1,579.0 L1155.4,579.2 L1151.7,578.4 L1148.0,577.1 Z" fill="rgba(187,191,192,0.436)"/><path d="M1148.0,610.2 L1151.7,609.9 L1155.4,610.1 L1159.1,609.3 L1162.8,610.0 L1166.5,610.6 L1170.2,610.2 L1173.9,610.2 L1177.7,611.0 L1181.4,610.1 L1185.1,610.5 L1188.8,608.4 L1192.5,607.9 L1196.2,610.0 L1199.9,610.3 L1203.6,609.3 L1207.3,609.0 L1211.0,610.0 L1214.7,609.2 L1218.4,610.2 L1222.1,610.7 L1225.8,611.2 L1229.5,608.8 L1233.2,609.5 L1237.0,610.9 L1240.7,609.4 L1244.4,610.0 L1248.1,609.9 L1251.8,610.5 L1255.5,610.0 L1259.2,609.2 L1262.9,610.6 L1266.6,610.4 L1270.3,608.6 L1274.0,609.7 L1277.7,608.7 L1281.4,610.0 L1285.1,608.9 L1288.8,609.9 L1292.6,608.8 L1296.3,611.2 L1300.0,611.3 L1303.7,609.9 L1307.4,610.5 L1311.1,609.1 L1314.8,610.7 L1318.5,610.9 L1322.2,608.8 L1325.9,610.1 L1329.6,610.3 L1333.3,610.3 L1337.0,609.8 L1340.7,610.2 L1344.4,610.2 L1348.1,610.6 L1351.9,609.6 L1355.6,609.2 L1359.3,610.0 L1363.0,609.0 L1366.7,610.8 L1370.4,610.1 L1374.1,611.1 L1377.8,610.2 L1381.5,607.8 L1385.2,610.5 L1388.9,610.0 L1392.6,609.3 L1396.3,610.6 L1400.0,611.3 L1403.7,609.7 L1407.4,609.2 L1411.2,610.6 L1414.9,610.5 L1418.6,610.2 L1422.3,609.5 L1426.0,610.4 L1429.7,609.3 L1433.4,608.2 L1437.1,610.0 L1440.8,610.0 L1444.5,609.4 L1448.2,609.6 L1451.9,608.8 L1455.6,609.8 L1459.3,609.5 L1463.0,610.5 L1466.8,609.5 L1470.5,610.3 L1474.2,609.8 L1477.9,609.1 L1481.6,610.4 L1485.3,608.9 L1489.0,611.5 L1492.7,609.6 L1496.4,610.3 L1500.1,610.8 L1503.8,609.8 L1507.5,611.6 L1511.2,610.2 L1514.9,610.3 L1518.6,610.3 L1522.3,610.0 L1526.1,609.7 L1529.8,610.5 L1533.5,610.0 L1537.2,610.1 L1540.9,610.0 L1544.6,609.6 L1548.3,611.2 L1552.0,609.7 L1555.7,609.5 L1559.4,609.6 L1563.1,609.7 L1566.8,610.3 L1570.5,610.9 L1574.2,610.8 L1577.9,610.5 L1581.7,610.6 L1585.4,611.3 L1589.1,610.9 L1592.8,610.9 L1596.5,610.4 L1600.2,609.8 L1603.9,610.3 L1607.6,611.0 L1611.3,610.2 L1615.0,609.9 L1618.7,611.3 L1622.4,609.0 L1626.1,610.6 L1629.8,610.1 L1633.5,609.8 L1637.2,611.1 L1641.0,608.7 L1644.7,611.2 L1648.4,610.7 L1652.1,610.5 L1655.8,609.3 L1659.5,610.7 L1663.2,610.2 L1666.9,609.9 L1670.6,611.8 L1674.3,610.8 L1678.0,610.4 L1681.7,611.0 L1685.4,610.7 L1689.1,610.8 L1692.8,611.3 L1696.6,609.6 L1700.3,609.9 L1704.0,609.5 L1707.7,609.9 L1711.4,610.7 L1715.1,609.8 L1718.8,610.1 L1722.5,610.7 L1726.2,609.6 L1729.9,611.5 L1733.6,610.5 L1737.3,609.7 L1741.0,610.7 L1744.7,611.5 L1748.4,611.4 L1752.1,610.4 L1755.9,610.3 L1759.6,610.7 L1763.3,608.3 L1767.0,611.4 L1770.7,608.6 L1774.4,610.4 L1778.1,609.3 L1781.8,610.4 L1785.5,610.2 L1789.2,611.2 L1792.9,610.4 L1796.6,610.6 L1800.3,611.7 L1804.0,610.6 L1807.7,610.7 L1811.4,610.6 L1815.2,610.6 L1818.9,610.2 L1822.6,609.8 L1826.3,610.6 L1830.0,610.9 L1833.7,609.8 L1837.4,609.6 L1841.1,611.1 L1844.8,610.6 L1848.5,610.2 L1852.2,609.1 L1855.9,610.2 L1859.6,610.8 L1863.3,612.2 L1867.0,610.3 L1870.8,611.2 L1874.5,609.4 L1878.2,609.8 L1881.9,610.1 L1885.6,610.4 L1889.3,611.2 L1893.0,609.8 L1896.7,610.1 L1900.4,609.7 L1904.1,609.6 L1907.8,610.7 L1911.5,610.3 L1915.2,610.1 L1918.9,611.8 L1922.6,610.3 L1926.3,610.8 L1930.1,612.2 L1933.8,609.7 L1937.5,610.9 L1941.2,609.8 L1944.9,610.0 L1948.6,609.5 L1952.3,609.4 L1956.0,611.2 L1959.7,610.3 L1963.4,610.5 L1967.1,608.7 L1970.8,611.5 L1974.5,610.7 L1978.2,609.5 L1981.9,610.6 L1985.7,610.4 L1989.4,610.2 L1993.1,610.1 L1996.8,610.3 L2000.5,611.9 L2004.2,610.9 L2007.9,610.5 L2011.6,610.8 L2015.3,610.7 L2019.0,610.9 L2022.7,610.6 L2026.4,610.8 L2030.1,610.4 L2033.8,610.3 L2037.5,610.4 L2041.2,608.8 L2045.0,609.6 L2048.7,610.9 L2052.4,610.6 L2056.1,609.1 L2059.8,611.4 L2063.5,609.0 L2067.2,610.4 L2070.9,610.6 L2074.6,611.0 L2078.3,611.1 L2082.0,610.6 L2085.7,609.7 L2089.4,610.9 L2093.1,610.3 L2096.8,609.9 L2100.6,610.4 L2104.3,610.6 L2108.0,610.8 L2111.7,610.7 L2115.4,610.0 L2119.1,610.6 L2122.8,609.4 L2126.5,611.2 L2130.2,611.1 L2133.9,609.5 L2137.6,611.4 L2141.3,610.9 L2145.0,611.3 L2148.7,610.1 L2152.4,610.6 L2156.1,610.1 L2159.9,610.8 L2163.6,610.2 L2167.3,612.2 L2171.0,610.2 L2174.7,610.6 L2178.4,609.4 L2182.1,610.2 L2185.8,610.2 L2189.5,610.4 L2193.2,611.7 L2196.9,611.3 L2200.6,610.8 L2204.3,610.4 L2208.0,609.2 L2211.7,610.3 L2215.4,611.6 L2219.2,610.8 L2222.9,610.6 L2226.6,611.4 L2230.3,610.8 L2234.0,611.5 L2237.7,611.1 L2241.4,609.9 L2245.1,610.6 L2248.8,610.1 L2252.5,610.0 L2256.2,611.3 L2259.9,610.2 L2263.6,611.3 L2267.3,611.1 L2271.0,609.9 L2274.8,610.3 L2278.5,610.3 L2282.2,611.0 L2285.9,610.8 L2289.6,609.9 L2293.3,610.4 L2297.0,609.0 L2300.7,611.0 L2304.4,609.6 L2308.1,611.1 L2311.8,610.0 L2315.5,609.8 L2319.2,610.7 L2322.9,611.7 L2326.6,610.8 L2330.3,609.8 L2334.1,610.9 L2337.8,611.0 L2341.5,611.3 L2345.2,610.9 L2348.9,610.7 L2352.6,609.4 L2356.3,610.5 L2360.0,612.1 L2363.7,610.6 L2367.4,611.1 L2371.1,610.8 L2374.8,611.2 L2378.5,610.7 L2382.2,609.9 L2385.9,612.1 L2389.7,611.3 L2393.4,611.0 L2397.1,611.3 L2400.8,611.1 L2404.5,611.8 L2408.2,610.6 L2411.9,612.2 L2415.6,610.6 L2419.3,610.7 L2423.0,610.0 L2426.7,609.9 L2430.4,610.7 L2434.1,611.9 L2437.8,611.2 L2441.5,610.6 L2445.2,610.7 L2449.0,609.8 L2452.7,610.2 L2456.4,611.2 L2460.1,610.2 L2463.8,609.9 L2467.5,611.3 L2471.2,612.3 L2474.9,611.2 L2478.6,609.6 L2482.3,610.3 L2486.0,610.8 L2489.7,610.9 L2493.4,610.3 L2497.1,609.4 L2500.8,610.1 L2504.6,609.3 L2508.3,611.3 L2512.0,610.5 L2515.7,611.2 L2519.4,611.0 L2523.1,610.6 L2526.8,609.6 L2530.5,610.2 L2534.2,610.6 L2537.9,612.0 L2541.6,610.2 L2545.3,611.6 L2549.0,610.8 L2552.7,610.6 L2556.4,610.6 L2560.1,610.4 L2563.9,611.1 L2567.6,609.9 L2571.3,610.2 L2575.0,611.8 L2578.7,610.6 L2582.4,610.1 L2586.1,611.7 L2589.8,609.9 L2593.5,610.5 L2597.2,610.4 L2600.9,610.4 L2604.6,610.0 L2608.3,609.5 L2612.0,611.5 L2615.7,611.3 L2619.4,611.2 L2623.2,611.4 L2626.9,610.6 L2630.6,610.9 L2634.3,608.7 L2638.0,610.3 L2641.7,610.1 L2645.4,610.9 L2649.1,610.8 L2652.8,610.8 L2656.5,611.8 L2660.2,609.7 L2663.9,611.1 L2667.6,611.0 L2671.3,611.3 L2675.0,612.5 L2678.8,609.7 L2682.5,611.8 L2686.2,610.7 L2689.9,610.2 L2693.6,611.4 L2697.3,610.0 L2701.0,610.6 L2704.7,611.6 L2708.4,610.4 L2712.1,610.2 L2715.8,610.6 L2719.5,609.5 L2723.2,610.0 L2726.9,609.9 L2730.6,610.8 L2734.3,611.1 L2738.1,610.7 L2741.8,609.7 L2745.5,610.9 L2749.2,611.2 L2752.9,610.9 L2756.6,610.7 L2760.3,611.8 L2764.0,609.5 L2767.7,611.0 L2771.4,610.9 L2775.1,609.6 L2778.8,610.9 L2782.5,610.0 L2786.2,609.5 L2789.9,609.7 L2793.7,610.5 L2797.4,611.9 L2801.1,609.1 L2804.8,611.5 L2808.5,609.8 L2812.2,611.0 L2815.9,610.1 L2819.6,610.9 L2823.3,611.0 L2827.0,611.6 L2830.7,611.1 L2834.4,611.4 L2838.1,610.9 L2841.8,610.3 L2845.5,610.4 L2849.2,611.3 L2853.0,611.2 L2856.7,611.5 L2860.4,612.1 L2864.1,610.6 L2867.8,611.3 L2871.5,610.2 L2875.2,609.4 L2878.9,609.9 L2882.6,611.1 L2886.3,610.4 L2890.0,611.4 L2893.7,611.3 L2897.4,610.1 L2901.1,610.4 L2904.8,610.9 L2908.6,610.9 L2912.3,611.3 L2916.0,611.2 L2919.7,609.8 L2923.4,611.0 L2927.1,612.0 L2930.8,611.0 L2934.5,610.4 L2938.2,611.0 L2941.9,611.3 L2945.6,610.3 L2949.3,610.6 L2953.0,610.6 L2956.7,612.1 L2960.4,610.5 L2964.1,610.8 L2967.9,611.1 L2971.6,610.8 L2975.3,610.4 L2979.0,611.7 L2982.7,610.0 L2986.4,609.5 L2990.1,611.6 L2993.8,610.6 L2997.5,611.1 L3001.2,610.2 L3004.9,612.0 L3008.6,610.9 L3012.3,610.9 L3016.0,609.0 L3019.7,610.7 L3023.4,609.6 L3027.2,611.8 L3030.9,610.4 L3034.6,611.1 L3038.3,610.5 L3042.0,611.6 L3045.7,611.2 L3049.4,609.5 L3053.1,611.1 L3056.8,612.7 L3060.5,610.4 L3064.2,609.6 L3067.9,611.4 L3071.6,610.5 L3075.3,610.5 L3079.0,610.2 L3082.8,608.6 L3086.5,611.0 L3090.2,611.5 L3093.9,610.2 L3097.6,611.3 L3101.3,611.7 L3105.0,610.9 L3108.7,611.4 L3112.4,610.9 L3116.1,610.7 L3119.8,611.4 L3123.5,611.1 L3127.2,611.7 L3130.9,611.6 L3134.6,610.0 L3138.3,611.5 L3142.1,611.3 L3145.8,611.7 L3149.5,611.1 L3153.2,610.6 L3156.9,610.8 L3160.6,612.0 L3164.3,611.3 L3168.0,611.0 L3168.0,620.7 L3164.3,617.1 L3160.6,617.0 L3156.9,625.0 L3153.2,619.0 L3149.5,618.5 L3145.8,618.1 L3142.1,618.8 L3138.3,617.0 L3134.6,618.3 L3130.9,620.3 L3127.2,617.8 L3123.5,618.8 L3119.8,617.0 L3116.1,618.2 L3112.4,617.9 L3108.7,617.3 L3105.0,617.2 L3101.3,617.7 L3097.6,617.0 L3093.9,618.2 L3090.2,625.4 L3086.5,617.7 L3082.8,617.0 L3079.0,619.9 L3075.3,617.4 L3071.6,617.9 L3067.9,617.8 L3064.2,620.4 L3060.5,617.1 L3056.8,618.3 L3053.1,617.1 L3049.4,617.0 L3045.7,617.3 L3042.0,617.2 L3038.3,617.0 L3034.6,617.0 L3030.9,620.0 L3027.2,620.6 L3023.4,617.0 L3019.7,617.2 L3016.0,618.6 L3012.3,617.1 L3008.6,617.5 L3004.9,617.1 L3001.2,617.0 L2997.5,617.0 L2993.8,617.0 L2990.1,620.3 L2986.4,617.0 L2982.7,617.1 L2979.0,617.5 L2975.3,621.8 L2971.6,617.5 L2967.9,617.0 L2964.1,621.0 L2960.4,617.9 L2956.7,617.4 L2953.0,617.0 L2949.3,621.0 L2945.6,617.4 L2941.9,620.5 L2938.2,620.1 L2934.5,617.0 L2930.8,625.2 L2927.1,617.2 L2923.4,617.8 L2919.7,618.4 L2916.0,617.1 L2912.3,617.1 L2908.6,620.2 L2904.8,617.8 L2901.1,617.0 L2897.4,618.1 L2893.7,617.0 L2890.0,618.0 L2886.3,617.0 L2882.6,617.6 L2878.9,617.0 L2875.2,617.3 L2871.5,617.0 L2867.8,617.1 L2864.1,617.9 L2860.4,617.6 L2856.7,617.0 L2853.0,617.2 L2849.2,620.0 L2845.5,619.7 L2841.8,617.0 L2838.1,618.9 L2834.4,618.1 L2830.7,617.6 L2827.0,617.9 L2823.3,617.7 L2819.6,620.7 L2815.9,617.3 L2812.2,617.0 L2808.5,617.0 L2804.8,617.8 L2801.1,617.0 L2797.4,617.0 L2793.7,617.0 L2789.9,617.0 L2786.2,617.5 L2782.5,617.0 L2778.8,617.0 L2775.1,626.4 L2771.4,618.4 L2767.7,617.0 L2764.0,618.9 L2760.3,626.5 L2756.6,617.0 L2752.9,617.0 L2749.2,617.0 L2745.5,617.5 L2741.8,618.2 L2738.1,618.6 L2734.3,617.0 L2730.6,617.2 L2726.9,617.0 L2723.2,617.4 L2719.5,617.0 L2715.8,617.0 L2712.1,619.6 L2708.4,617.0 L2704.7,617.0 L2701.0,617.6 L2697.3,617.0 L2693.6,621.4 L2689.9,620.9 L2686.2,619.1 L2682.5,617.0 L2678.8,618.1 L2675.0,617.0 L2671.3,617.0 L2667.6,617.7 L2663.9,617.0 L2660.2,617.0 L2656.5,617.0 L2652.8,617.3 L2649.1,617.1 L2645.4,625.5 L2641.7,617.1 L2638.0,618.7 L2634.3,617.0 L2630.6,617.0 L2626.9,617.0 L2623.2,617.0 L2619.4,617.0 L2615.7,617.0 L2612.0,617.2 L2608.3,617.0 L2604.6,617.0 L2600.9,618.1 L2597.2,626.5 L2593.5,617.0 L2589.8,617.2 L2586.1,617.0 L2582.4,617.0 L2578.7,619.7 L2575.0,617.0 L2571.3,617.0 L2567.6,617.0 L2563.9,620.3 L2560.1,618.2 L2556.4,617.0 L2552.7,618.6 L2549.0,617.7 L2545.3,617.0 L2541.6,617.0 L2537.9,617.7 L2534.2,623.8 L2530.5,622.4 L2526.8,618.6 L2523.1,617.0 L2519.4,617.0 L2515.7,618.5 L2512.0,617.8 L2508.3,618.3 L2504.6,617.0 L2500.8,617.0 L2497.1,617.8 L2493.4,617.0 L2489.7,620.2 L2486.0,618.1 L2482.3,618.2 L2478.6,617.0 L2474.9,617.0 L2471.2,617.0 L2467.5,617.5 L2463.8,617.0 L2460.1,617.0 L2456.4,617.4 L2452.7,617.0 L2449.0,617.9 L2445.2,617.2 L2441.5,618.4 L2437.8,617.5 L2434.1,618.6 L2430.4,617.4 L2426.7,617.0 L2423.0,618.3 L2419.3,617.0 L2415.6,617.0 L2411.9,617.0 L2408.2,617.0 L2404.5,617.9 L2400.8,617.0 L2397.1,617.0 L2393.4,617.0 L2389.7,617.0 L2385.9,618.8 L2382.2,623.3 L2378.5,619.3 L2374.8,617.0 L2371.1,617.0 L2367.4,618.9 L2363.7,617.0 L2360.0,617.0 L2356.3,617.0 L2352.6,617.0 L2348.9,617.0 L2345.2,620.0 L2341.5,618.0 L2337.8,617.7 L2334.1,619.3 L2330.3,617.0 L2326.6,617.0 L2322.9,622.5 L2319.2,617.0 L2315.5,617.3 L2311.8,617.1 L2308.1,617.0 L2304.4,617.0 L2300.7,627.2 L2297.0,617.0 L2293.3,617.5 L2289.6,620.1 L2285.9,621.4 L2282.2,621.0 L2278.5,617.0 L2274.8,617.0 L2271.0,617.0 L2267.3,619.6 L2263.6,617.0 L2259.9,619.0 L2256.2,617.4 L2252.5,617.0 L2248.8,617.0 L2245.1,617.3 L2241.4,618.6 L2237.7,617.0 L2234.0,620.0 L2230.3,620.1 L2226.6,617.0 L2222.9,618.5 L2219.2,617.0 L2215.4,617.3 L2211.7,618.1 L2208.0,620.6 L2204.3,617.0 L2200.6,617.1 L2196.9,617.0 L2193.2,619.2 L2189.5,617.0 L2185.8,617.0 L2182.1,617.0 L2178.4,617.2 L2174.7,617.0 L2171.0,622.5 L2167.3,617.5 L2163.6,617.1 L2159.9,617.0 L2156.1,617.0 L2152.4,617.0 L2148.7,618.9 L2145.0,617.0 L2141.3,618.9 L2137.6,617.5 L2133.9,617.0 L2130.2,617.0 L2126.5,617.0 L2122.8,617.0 L2119.1,617.0 L2115.4,617.5 L2111.7,617.0 L2108.0,617.7 L2104.3,617.0 L2100.6,617.0 L2096.8,617.0 L2093.1,618.7 L2089.4,617.0 L2085.7,618.8 L2082.0,617.0 L2078.3,617.1 L2074.6,617.6 L2070.9,617.0 L2067.2,617.0 L2063.5,617.6 L2059.8,617.3 L2056.1,617.0 L2052.4,617.0 L2048.7,617.0 L2045.0,619.2 L2041.2,618.1 L2037.5,617.0 L2033.8,619.7 L2030.1,617.0 L2026.4,617.3 L2022.7,617.0 L2019.0,617.0 L2015.3,618.7 L2011.6,617.9 L2007.9,617.0 L2004.2,617.0 L2000.5,622.1 L1996.8,624.5 L1993.1,618.5 L1989.4,617.0 L1985.7,617.8 L1981.9,617.0 L1978.2,617.0 L1974.5,617.0 L1970.8,617.0 L1967.1,617.0 L1963.4,621.4 L1959.7,617.0 L1956.0,618.1 L1952.3,617.0 L1948.6,622.2 L1944.9,617.0 L1941.2,618.5 L1937.5,617.0 L1933.8,617.0 L1930.1,617.7 L1926.3,617.0 L1922.6,619.3 L1918.9,617.0 L1915.2,617.3 L1911.5,617.0 L1907.8,617.0 L1904.1,623.3 L1900.4,618.9 L1896.7,617.4 L1893.0,617.0 L1889.3,617.0 L1885.6,618.1 L1881.9,621.2 L1878.2,628.5 L1874.5,617.0 L1870.8,617.0 L1867.0,620.2 L1863.3,618.4 L1859.6,617.0 L1855.9,617.0 L1852.2,620.0 L1848.5,618.3 L1844.8,624.1 L1841.1,619.5 L1837.4,617.0 L1833.7,617.0 L1830.0,617.0 L1826.3,619.6 L1822.6,617.0 L1818.9,617.0 L1815.2,620.3 L1811.4,617.0 L1807.7,617.0 L1804.0,617.0 L1800.3,619.0 L1796.6,620.3 L1792.9,618.3 L1789.2,617.0 L1785.5,617.8 L1781.8,617.0 L1778.1,617.0 L1774.4,617.6 L1770.7,617.1 L1767.0,617.0 L1763.3,622.0 L1759.6,617.0 L1755.9,618.7 L1752.1,619.4 L1748.4,618.5 L1744.7,623.8 L1741.0,618.2 L1737.3,617.3 L1733.6,617.0 L1729.9,617.0 L1726.2,617.0 L1722.5,619.4 L1718.8,617.0 L1715.1,618.7 L1711.4,617.0 L1707.7,621.4 L1704.0,619.1 L1700.3,617.1 L1696.6,617.2 L1692.8,617.2 L1689.1,618.0 L1685.4,617.0 L1681.7,619.5 L1678.0,617.8 L1674.3,617.0 L1670.6,620.7 L1666.9,620.6 L1663.2,617.5 L1659.5,617.0 L1655.8,620.8 L1652.1,620.0 L1648.4,617.0 L1644.7,617.0 L1641.0,618.5 L1637.2,617.0 L1633.5,619.2 L1629.8,617.0 L1626.1,617.0 L1622.4,617.0 L1618.7,619.3 L1615.0,617.0 L1611.3,617.0 L1607.6,617.0 L1603.9,617.0 L1600.2,619.6 L1596.5,617.7 L1592.8,617.0 L1589.1,622.3 L1585.4,617.0 L1581.7,617.0 L1577.9,617.0 L1574.2,617.0 L1570.5,617.0 L1566.8,617.0 L1563.1,617.0 L1559.4,617.0 L1555.7,617.0 L1552.0,617.0 L1548.3,619.1 L1544.6,617.0 L1540.9,627.9 L1537.2,617.0 L1533.5,617.0 L1529.8,617.0 L1526.1,617.0 L1522.3,620.6 L1518.6,618.0 L1514.9,618.3 L1511.2,623.3 L1507.5,617.0 L1503.8,617.0 L1500.1,618.2 L1496.4,617.0 L1492.7,618.3 L1489.0,617.9 L1485.3,620.9 L1481.6,620.2 L1477.9,617.0 L1474.2,617.0 L1470.5,617.0 L1466.8,617.0 L1463.0,617.5 L1459.3,617.3 L1455.6,617.9 L1451.9,617.0 L1448.2,617.0 L1444.5,617.0 L1440.8,617.0 L1437.1,617.0 L1433.4,617.0 L1429.7,617.0 L1426.0,618.1 L1422.3,617.0 L1418.6,620.2 L1414.9,617.0 L1411.2,617.3 L1407.4,619.7 L1403.7,620.4 L1400.0,617.2 L1396.3,617.0 L1392.6,617.0 L1388.9,617.0 L1385.2,617.0 L1381.5,617.0 L1377.8,617.0 L1374.1,622.7 L1370.4,617.0 L1366.7,617.0 L1363.0,617.0 L1359.3,622.9 L1355.6,617.0 L1351.9,617.0 L1348.1,617.0 L1344.4,617.0 L1340.7,617.0 L1337.0,617.0 L1333.3,617.0 L1329.6,617.0 L1325.9,617.0 L1322.2,617.2 L1318.5,619.9 L1314.8,617.0 L1311.1,617.9 L1307.4,617.0 L1303.7,617.6 L1300.0,617.5 L1296.3,617.0 L1292.6,618.9 L1288.8,625.7 L1285.1,617.0 L1281.4,617.0 L1277.7,617.0 L1274.0,621.0 L1270.3,623.0 L1266.6,617.0 L1262.9,617.0 L1259.2,617.0 L1255.5,618.1 L1251.8,617.0 L1248.1,617.0 L1244.4,617.0 L1240.7,618.3 L1237.0,617.0 L1233.2,618.4 L1229.5,617.5 L1225.8,617.0 L1222.1,620.3 L1218.4,617.0 L1214.7,619.9 L1211.0,617.0 L1207.3,617.0 L1203.6,618.1 L1199.9,623.2 L1196.2,617.0 L1192.5,617.0 L1188.8,617.4 L1185.1,617.0 L1181.4,628.3 L1177.7,617.0 L1173.9,617.0 L1170.2,618.0 L1166.5,617.6 L1162.8,617.2 L1159.1,617.0 L1155.4,617.1 L1151.7,617.0 L1148.0,617.0 Z" fill="rgba(187,191,192,0.436)"/><rect x="1148" y="607.8" width="2020" height="2.4" fill="#b9b8ce"/><rect x="1473.4" y="607" width="2" height="7" fill="#b9b8ce"/><rect x="1820.1" y="607" width="2" height="7" fill="#b9b8ce"/><rect x="2166.8" y="607" width="2" height="7" fill="#b9b8ce"/><rect x="2513.5" y="607" width="2" height="7" fill="#b9b8ce"/><rect x="2860.2" y="607" width="2" height="7" fill="#b9b8ce"/><path d="M1148.0,559.3 L1151.7,563.8 L1155.4,565.6 L1159.1,562.6 L1162.8,558.7 L1166.5,560.9 L1170.2,561.9 L1173.9,557.3 L1177.7,555.9 L1181.4,558.7 L1185.1,557.3 L1188.8,554.8 L1192.5,558.3 L1196.2,552.2 L1199.9,551.7 L1203.6,548.4 L1207.3,555.2 L1211.0,551.5 L1214.7,552.0 L1218.4,543.0 L1222.1,542.6 L1225.8,543.8 L1229.5,550.8 L1233.2,558.7 L1237.0,562.0 L1240.7,565.9 L1244.4,562.6 L1248.1,562.6 L1251.8,563.1 L1255.5,556.7 L1259.2,559.7 L1262.9,560.8 L1266.6,565.0 L1270.3,559.2 L1274.0,562.8 L1277.7,564.1 L1281.4,561.9 L1285.1,568.3 L1288.8,568.1 L1292.6,567.3 L1296.3,562.2 L1300.0,560.4 L1303.7,564.9 L1307.4,567.2 L1311.1,563.1 L1314.8,558.2 L1318.5,561.3 L1322.2,561.2 L1325.9,561.6 L1329.6,556.4 L1333.3,514.6 L1337.0,517.0 L1340.7,555.0 L1344.4,560.3 L1348.1,555.5 L1351.9,553.1 L1355.6,550.1 L1359.3,552.2 L1363.0,550.4 L1366.7,552.3 L1370.4,560.1 L1374.1,560.7 L1377.8,557.5 L1381.5,558.1 L1385.2,556.3 L1388.9,559.0 L1392.6,562.2 L1396.3,560.9 L1400.0,563.9 L1403.7,562.3 L1407.4,560.8 L1411.2,564.8 L1414.9,562.1 L1418.6,561.2 L1422.3,559.2 L1426.0,558.0 L1429.7,556.9 L1433.4,558.0 L1437.1,559.2 L1440.8,558.5 L1444.5,557.0 L1448.2,554.4 L1451.9,560.8 L1455.6,559.5 L1459.3,560.9 L1463.0,555.3 L1466.8,556.3 L1470.5,554.9 L1474.2,553.3 L1477.9,557.9 L1481.6,555.3 L1485.3,553.2 L1489.0,547.3 L1492.7,553.6 L1496.4,543.8 L1500.1,544.5 L1503.8,543.7 L1507.5,550.5 L1511.2,547.5 L1514.9,546.7 L1518.6,546.5 L1522.3,542.9 L1526.1,545.0 L1529.8,542.6 L1533.5,539.5 L1537.2,540.6 L1540.9,540.5 L1544.6,542.2 L1548.3,544.3 L1552.0,547.4 L1555.7,543.8 L1559.4,542.2 L1563.1,546.8 L1566.8,547.4 L1570.5,547.0 L1574.2,547.2 L1577.9,549.7 L1581.7,549.7 L1585.4,553.5 L1589.1,546.5 L1592.8,545.9 L1596.5,542.6 L1600.2,540.0 L1603.9,539.3 L1607.6,541.2 L1611.3,545.1 L1615.0,543.2 L1618.7,541.9 L1622.4,545.5 L1626.1,550.4 L1629.8,546.4 L1633.5,547.3 L1637.2,553.6 L1641.0,550.6 L1644.7,550.8 L1648.4,551.4 L1652.1,550.0 L1655.8,550.6 L1659.5,552.3 L1663.2,555.1 L1666.9,553.4 L1670.6,558.3 L1674.3,554.1 L1678.0,554.4 L1681.7,553.7 L1685.4,555.1 L1689.1,551.7 L1692.8,554.8 L1696.6,553.9 L1700.3,555.7 L1704.0,552.4 L1707.7,550.2 L1711.4,555.5 L1715.1,557.4 L1718.8,553.6 L1722.5,556.4 L1726.2,551.6 L1729.9,554.9 L1733.6,552.7 L1737.3,550.6 L1741.0,548.0 L1744.7,548.4 L1748.4,550.3 L1752.1,549.3 L1755.9,549.0 L1759.6,551.2 L1763.3,546.6 L1767.0,547.3 L1770.7,544.9 L1774.4,541.8 L1778.1,544.7 L1781.8,547.7 L1785.5,549.0 L1789.2,548.6 L1792.9,544.8 L1796.6,544.9 L1800.3,535.2 L1804.0,535.8 L1807.7,538.8 L1811.4,533.7 L1815.2,531.7 L1818.9,534.2 L1822.6,531.6 L1826.3,536.5 L1830.0,538.9 L1833.7,533.2 L1837.4,536.3 L1841.1,539.5 L1844.8,536.4 L1848.5,536.4 L1852.2,536.8 L1855.9,533.1 L1859.6,527.7 L1863.3,530.8 L1867.0,525.5 L1870.8,530.2 L1874.5,529.7 L1878.2,532.6 L1881.9,534.6 L1885.6,530.4 L1889.3,528.3 L1893.0,530.9 L1896.7,531.0 L1900.4,531.6 L1904.1,530.7 L1907.8,530.0 L1911.5,530.7 L1915.2,528.9 L1918.9,526.2 L1922.6,525.9 L1926.3,522.5 L1930.1,524.3 L1933.8,520.6 L1937.5,520.5 L1941.2,514.8 L1944.9,517.0 L1948.6,516.2 L1952.3,514.7 L1956.0,514.6 L1959.7,518.1 L1963.4,519.4 L1967.1,517.2 L1970.8,515.4 L1974.5,519.4 L1978.2,520.8 L1981.9,518.9 L1985.7,519.2 L1989.4,517.2 L1993.1,510.6 L1996.8,513.7 L2000.5,513.9 L2004.2,512.7 L2007.9,506.0 L2011.6,501.5 L2015.3,496.2 L2019.0,490.2 L2022.7,492.0 L2026.4,488.4 L2030.1,488.9 L2033.8,493.2 L2037.5,490.5 L2041.2,493.2 L2045.0,496.7 L2048.7,488.9 L2052.4,491.1 L2056.1,490.8 L2059.8,491.1 L2063.5,493.6 L2067.2,496.3 L2070.9,495.0 L2074.6,495.6 L2078.3,492.7 L2082.0,492.9 L2085.7,490.3 L2089.4,493.5 L2093.1,492.9 L2096.8,490.7 L2100.6,490.3 L2104.3,486.5 L2108.0,491.9 L2111.7,487.0 L2115.4,483.8 L2119.1,482.2 L2122.8,468.4 L2126.5,474.0 L2130.2,470.6 L2133.9,468.6 L2137.6,465.5 L2141.3,464.5 L2145.0,468.5 L2148.7,471.0 L2152.4,468.3 L2156.1,472.9 L2159.9,477.7 L2163.6,477.4 L2167.3,485.0 L2171.0,482.9 L2174.7,484.4 L2178.4,483.0 L2182.1,484.5 L2185.8,482.3 L2189.5,480.8 L2193.2,481.8 L2196.9,476.9 L2200.6,472.7 L2204.3,482.1 L2208.0,480.3 L2211.7,478.4 L2215.4,479.9 L2219.2,480.2 L2222.9,482.2 L2226.6,484.8 L2230.3,486.8 L2234.0,482.1 L2237.7,486.9 L2241.4,483.6 L2245.1,482.3 L2248.8,486.1 L2252.5,480.2 L2256.2,480.0 L2259.9,477.7 L2263.6,473.4 L2267.3,471.7 L2271.0,477.4 L2274.8,482.4 L2278.5,483.9 L2282.2,485.9 L2285.9,487.0 L2289.6,488.8 L2293.3,490.7 L2297.0,487.8 L2300.7,484.5 L2304.4,483.3 L2308.1,484.9 L2311.8,489.2 L2315.5,491.0 L2319.2,491.3 L2322.9,494.1 L2326.6,492.9 L2330.3,493.5 L2334.1,496.7 L2337.8,491.6 L2341.5,496.7 L2345.2,498.3 L2348.9,498.8 L2352.6,497.1 L2356.3,491.4 L2360.0,494.0 L2363.7,486.6 L2367.4,483.1 L2371.1,486.1 L2374.8,478.2 L2378.5,483.0 L2382.2,486.0 L2385.9,485.6 L2389.7,491.1 L2393.4,492.2 L2397.1,492.7 L2400.8,497.0 L2404.5,500.9 L2408.2,502.0 L2411.9,508.9 L2415.6,509.4 L2419.3,517.6 L2423.0,514.0 L2426.7,516.1 L2430.4,511.0 L2434.1,513.8 L2437.8,512.1 L2441.5,507.9 L2445.2,506.9 L2449.0,514.2 L2452.7,514.3 L2456.4,519.3 L2460.1,522.8 L2463.8,528.2 L2467.5,527.3 L2471.2,536.4 L2474.9,541.8 L2478.6,546.3 L2482.3,539.3 L2486.0,539.5 L2489.7,539.8 L2493.4,541.0 L2497.1,539.3 L2500.8,536.8 L2504.6,541.7 L2508.3,545.2 L2512.0,542.2 L2515.7,547.6 L2519.4,547.2 L2523.1,545.8 L2526.8,544.9 L2530.5,547.1 L2534.2,553.1 L2537.9,549.5 L2541.6,554.9 L2545.3,555.5 L2549.0,553.5 L2552.7,550.6 L2556.4,550.9 L2560.1,553.8 L2563.9,560.4 L2567.6,559.7 L2571.3,558.5 L2575.0,564.2 L2578.7,567.3 L2582.4,567.6 L2586.1,569.7 L2589.8,564.1 L2593.5,559.4 L2597.2,564.3 L2600.9,565.2 L2604.6,563.8 L2608.3,563.4 L2612.0,565.8 L2615.7,562.8 L2619.4,558.6 L2623.2,564.8 L2626.9,561.2 L2630.6,562.3 L2634.3,565.5 L2638.0,566.0 L2641.7,566.3 L2645.4,560.9 L2649.1,561.7 L2652.8,566.5 L2656.5,565.9 L2660.2,570.7 L2663.9,571.2 L2667.6,573.5 L2671.3,572.0 L2675.0,569.1 L2678.8,572.5 L2682.5,577.2 L2686.2,569.8 L2689.9,575.9 L2693.6,576.2 L2697.3,572.1 L2701.0,573.4 L2704.7,573.7 L2708.4,571.8 L2712.1,572.2 L2715.8,569.8 L2719.5,567.3 L2723.2,564.4 L2726.9,565.7 L2730.6,567.0 L2734.3,566.1 L2738.1,569.9 L2741.8,569.6 L2745.5,569.2 L2749.2,568.9 L2752.9,568.6 L2756.6,570.9 L2760.3,574.2 L2764.0,576.9 L2767.7,577.7 L2771.4,576.1 L2775.1,578.1 L2778.8,574.5 L2782.5,580.5 L2786.2,583.1 L2789.9,577.2 L2793.7,578.2 L2797.4,575.1 L2801.1,574.1 L2804.8,572.9 L2808.5,572.5 L2812.2,572.3 L2815.9,573.2 L2819.6,572.8 L2823.3,579.7 L2827.0,583.4 L2830.7,584.9 L2834.4,582.7 L2838.1,582.1 L2841.8,581.8 L2845.5,575.4 L2849.2,577.9 L2853.0,580.8 L2856.7,575.0 L2860.4,574.9 L2864.1,581.8 L2867.8,580.3 L2871.5,576.0 L2875.2,575.0 L2878.9,570.5 L2882.6,571.9 L2886.3,571.8 L2890.0,567.5 L2893.7,570.2 L2897.4,573.2 L2901.1,569.9 L2904.8,570.0 L2908.6,570.1 L2912.3,564.0 L2916.0,568.3 L2919.7,566.5 L2923.4,570.5 L2927.1,566.4 L2930.8,570.5 L2934.5,571.4 L2938.2,567.7 L2941.9,570.0 L2945.6,568.8 L2949.3,574.1 L2953.0,575.6 L2956.7,578.5 L2960.4,578.1 L2964.1,575.4 L2967.9,576.5 L2971.6,575.0 L2975.3,575.5 L2979.0,576.3 L2982.7,569.1 L2986.4,571.2 L2990.1,569.2 L2993.8,572.1 L2997.5,577.0 L3001.2,576.3 L3004.9,579.8 L3008.6,580.0 L3012.3,581.9 L3016.0,582.1 L3019.7,579.4 L3023.4,577.3 L3027.2,574.2 L3030.9,573.5 L3034.6,573.2 L3038.3,572.0 L3042.0,569.6 L3045.7,573.4 L3049.4,570.7 L3053.1,568.8 L3056.8,568.6 L3060.5,568.7 L3064.2,566.0 L3067.9,563.6 L3071.6,560.2 L3075.3,558.9 L3079.0,565.0 L3082.8,563.7 L3086.5,562.7 L3090.2,565.7 L3093.9,560.9 L3097.6,566.6 L3101.3,567.5 L3105.0,564.4 L3108.7,563.6 L3112.4,567.0 L3116.1,566.6 L3119.8,570.5 L3123.5,569.2 L3127.2,564.3 L3130.9,563.3 L3134.6,556.7 L3138.3,553.9 L3142.1,557.9 L3145.8,560.4 L3149.5,565.4 L3153.2,566.9 L3156.9,562.1 L3160.6,563.2 L3164.3,559.7 L3168.0,562.8" fill="none" stroke="#fddd60" stroke-width="4" stroke-linejoin="round"/><path d="M1148.0,612.2 L1151.7,611.9 L1155.4,612.1 L1159.1,611.3 L1162.8,612.0 L1166.5,613.7 L1170.2,612.2 L1173.9,612.2 L1177.7,613.0 L1181.4,612.8 L1185.1,612.7 L1188.8,610.4 L1192.5,609.9 L1196.2,612.0 L1199.9,612.3 L1203.6,611.3 L1207.3,611.0 L1211.0,612.0 L1214.7,611.2 L1218.4,612.9 L1222.1,612.7 L1225.8,613.3 L1229.5,610.8 L1233.2,611.5 L1237.0,612.9 L1240.7,611.4 L1244.4,612.0 L1248.1,611.9 L1251.8,612.5 L1255.5,612.0 L1259.2,611.2 L1262.9,612.9 L1266.6,612.4 L1270.3,610.6 L1274.0,611.7 L1277.7,610.7 L1281.4,612.0 L1285.1,610.9 L1288.8,612.0 L1292.6,610.8 L1296.3,613.2 L1300.0,613.3 L1303.7,611.9 L1307.4,612.5 L1311.1,611.1 L1314.8,612.7 L1318.5,613.0 L1322.2,610.8 L1325.9,612.1 L1329.6,612.3 L1333.3,612.3 L1337.0,612.7 L1340.7,612.2 L1344.4,613.3 L1348.1,612.6 L1351.9,611.6 L1355.6,611.2 L1359.3,612.0 L1363.0,611.0 L1366.7,612.8 L1370.4,612.1 L1374.1,613.1 L1377.8,612.2 L1381.5,609.8 L1385.2,612.5 L1388.9,612.5 L1392.6,611.3 L1396.3,612.6 L1400.0,613.3 L1403.7,611.7 L1407.4,611.2 L1411.2,613.2 L1414.9,612.5 L1418.6,612.2 L1422.3,611.5 L1426.0,612.4 L1429.7,611.3 L1433.4,610.2 L1437.1,612.0 L1440.8,612.5 L1444.5,611.4 L1448.2,613.0 L1451.9,610.8 L1455.6,611.8 L1459.3,612.7 L1463.0,612.5 L1466.8,611.5 L1470.5,612.7 L1474.2,611.8 L1477.9,611.1 L1481.6,612.4 L1485.3,610.9 L1489.0,613.5 L1492.7,611.6 L1496.4,612.3 L1500.1,612.8 L1503.8,611.8 L1507.5,613.6 L1511.2,612.2 L1514.9,612.8 L1518.6,612.3 L1522.3,613.0 L1526.1,613.6 L1529.8,612.5 L1533.5,614.2 L1537.2,612.1 L1540.9,612.0 L1544.6,611.6 L1548.3,613.2 L1552.0,611.7 L1555.7,611.5 L1559.4,611.6 L1563.1,611.7 L1566.8,612.3 L1570.5,612.9 L1574.2,612.9 L1577.9,612.5 L1581.7,613.2 L1585.4,613.3 L1589.1,612.9 L1592.8,614.3 L1596.5,612.4 L1600.2,611.8 L1603.9,612.3 L1607.6,613.0 L1611.3,612.6 L1615.0,611.9 L1618.7,613.3 L1622.4,611.0 L1626.1,613.0 L1629.8,614.2 L1633.5,611.8 L1637.2,613.8 L1641.0,612.8 L1644.7,613.3 L1648.4,612.7 L1652.1,612.5 L1655.8,611.3 L1659.5,613.2 L1663.2,612.2 L1666.9,611.9 L1670.6,614.3 L1674.3,612.8 L1678.0,612.4 L1681.7,613.4 L1685.4,613.2 L1689.1,613.9 L1692.8,613.3 L1696.6,611.6 L1700.3,611.9 L1704.0,614.0 L1707.7,611.9 L1711.4,612.8 L1715.1,611.8 L1718.8,612.1 L1722.5,614.3 L1726.2,611.6 L1729.9,613.5 L1733.6,612.5 L1737.3,614.8 L1741.0,615.7 L1744.7,618.0 L1748.4,616.0 L1752.1,613.1 L1755.9,612.3 L1759.6,612.7 L1763.3,612.3 L1767.0,613.8 L1770.7,610.6 L1774.4,612.4 L1778.1,611.3 L1781.8,612.6 L1785.5,613.8 L1789.2,613.2 L1792.9,615.8 L1796.6,617.8 L1800.3,616.5 L1804.0,613.9 L1807.7,612.8 L1811.4,612.6 L1815.2,612.6 L1818.9,612.2 L1822.6,611.8 L1826.3,613.2 L1830.0,612.9 L1833.7,611.8 L1837.4,611.6 L1841.1,613.7 L1844.8,613.3 L1848.5,612.8 L1852.2,612.0 L1855.9,612.4 L1859.6,613.0 L1863.3,614.2 L1867.0,612.3 L1870.8,614.2 L1874.5,611.4 L1878.2,611.8 L1881.9,612.5 L1885.6,614.7 L1889.3,613.9 L1893.0,611.8 L1896.7,614.9 L1900.4,612.8 L1904.1,611.6 L1907.8,614.0 L1911.5,613.8 L1915.2,612.1 L1918.9,614.4 L1922.6,612.3 L1926.3,612.8 L1930.1,615.2 L1933.8,611.7 L1937.5,612.9 L1941.2,612.8 L1944.9,613.7 L1948.6,612.2 L1952.3,612.1 L1956.0,613.9 L1959.7,612.3 L1963.4,613.7 L1967.1,610.7 L1970.8,613.5 L1974.5,613.2 L1978.2,612.7 L1981.9,612.6 L1985.7,613.8 L1989.4,612.2 L1993.1,612.4 L1996.8,612.3 L2000.5,613.9 L2004.2,614.4 L2007.9,614.1 L2011.6,614.2 L2015.3,612.7 L2019.0,613.4 L2022.7,613.0 L2026.4,614.8 L2030.1,614.3 L2033.8,613.3 L2037.5,613.7 L2041.2,610.8 L2045.0,611.6 L2048.7,612.9 L2052.4,612.6 L2056.1,612.8 L2059.8,613.4 L2063.5,611.0 L2067.2,612.6 L2070.9,612.6 L2074.6,613.3 L2078.3,613.2 L2082.0,612.6 L2085.7,614.3 L2089.4,614.4 L2093.1,612.3 L2096.8,613.3 L2100.6,613.4 L2104.3,612.8 L2108.0,615.2 L2111.7,612.7 L2115.4,615.0 L2119.1,612.6 L2122.8,613.6 L2126.5,613.8 L2130.2,613.1 L2133.9,612.8 L2137.6,615.0 L2141.3,612.9 L2145.0,613.3 L2148.7,612.1 L2152.4,612.6 L2156.1,612.1 L2159.9,612.8 L2163.6,612.2 L2167.3,615.0 L2171.0,613.8 L2174.7,612.6 L2178.4,614.7 L2182.1,612.2 L2185.8,612.2 L2189.5,613.4 L2193.2,615.2 L2196.9,613.3 L2200.6,614.6 L2204.3,612.9 L2208.0,613.6 L2211.7,613.7 L2215.4,613.9 L2219.2,613.3 L2222.9,612.6 L2226.6,613.4 L2230.3,614.0 L2234.0,613.5 L2237.7,613.1 L2241.4,612.7 L2245.1,614.1 L2248.8,614.5 L2252.5,613.8 L2256.2,614.9 L2259.9,612.2 L2263.6,614.0 L2267.3,613.1 L2271.0,613.5 L2274.8,612.8 L2278.5,613.5 L2282.2,615.1 L2285.9,614.2 L2289.6,613.3 L2293.3,614.6 L2297.0,611.0 L2300.7,613.1 L2304.4,613.1 L2308.1,614.0 L2311.8,612.0 L2315.5,611.8 L2319.2,613.0 L2322.9,613.7 L2326.6,613.3 L2330.3,613.8 L2334.1,613.0 L2337.8,615.2 L2341.5,613.3 L2345.2,614.2 L2348.9,613.5 L2352.6,613.2 L2356.3,612.5 L2360.0,614.1 L2363.7,613.7 L2367.4,614.0 L2371.1,613.9 L2374.8,613.2 L2378.5,614.7 L2382.2,611.9 L2385.9,616.3 L2389.7,613.3 L2393.4,613.6 L2397.1,613.3 L2400.8,613.9 L2404.5,615.4 L2408.2,612.6 L2411.9,614.3 L2415.6,612.6 L2419.3,613.2 L2423.0,612.4 L2426.7,614.0 L2430.4,614.5 L2434.1,613.9 L2437.8,615.0 L2441.5,613.0 L2445.2,612.7 L2449.0,615.4 L2452.7,613.2 L2456.4,614.0 L2460.1,613.9 L2463.8,613.8 L2467.5,615.0 L2471.2,614.5 L2474.9,613.4 L2478.6,613.4 L2482.3,612.3 L2486.0,613.8 L2489.7,612.9 L2493.4,613.6 L2497.1,615.3 L2500.8,612.1 L2504.6,613.7 L2508.3,613.7 L2512.0,613.8 L2515.7,615.5 L2519.4,613.3 L2523.1,612.6 L2526.8,614.2 L2530.5,612.2 L2534.2,612.6 L2537.9,615.2 L2541.6,614.2 L2545.3,613.8 L2549.0,613.9 L2552.7,616.1 L2556.4,613.7 L2560.1,615.7 L2563.9,614.4 L2567.6,613.2 L2571.3,612.2 L2575.0,613.9 L2578.7,612.8 L2582.4,612.5 L2586.1,613.9 L2589.8,614.7 L2593.5,614.5 L2597.2,612.4 L2600.9,615.6 L2604.6,613.4 L2608.3,611.5 L2612.0,613.5 L2615.7,613.3 L2619.4,614.2 L2623.2,613.8 L2626.9,613.6 L2630.6,613.4 L2634.3,613.9 L2638.0,612.3 L2641.7,614.4 L2645.4,615.2 L2649.1,614.1 L2652.8,614.8 L2656.5,613.9 L2660.2,611.7 L2663.9,614.3 L2667.6,615.2 L2671.3,614.2 L2675.0,614.5 L2678.8,614.7 L2682.5,613.8 L2686.2,614.9 L2689.9,612.6 L2693.6,614.7 L2697.3,614.5 L2701.0,615.1 L2704.7,614.5 L2708.4,613.9 L2712.1,612.2 L2715.8,614.0 L2719.5,612.4 L2723.2,614.9 L2726.9,613.6 L2730.6,614.7 L2734.3,614.3 L2738.1,612.7 L2741.8,612.7 L2745.5,615.0 L2749.2,613.2 L2752.9,613.6 L2756.6,614.1 L2760.3,615.5 L2764.0,614.1 L2767.7,613.0 L2771.4,614.4 L2775.1,614.5 L2778.8,614.5 L2782.5,612.0 L2786.2,613.4 L2789.9,613.0 L2793.7,614.1 L2797.4,614.5 L2801.1,611.1 L2804.8,615.0 L2808.5,614.0 L2812.2,613.5 L2815.9,612.1 L2819.6,613.2 L2823.3,615.2 L2827.0,614.9 L2830.7,615.1 L2834.4,615.6 L2838.1,612.9 L2841.8,613.5 L2845.5,612.7 L2849.2,613.5 L2853.0,614.7 L2856.7,613.5 L2860.4,615.1 L2864.1,615.4 L2867.8,614.6 L2871.5,613.9 L2875.2,614.8 L2878.9,612.9 L2882.6,615.1 L2886.3,613.7 L2890.0,613.6 L2893.7,613.3 L2897.4,612.5 L2901.1,612.4 L2904.8,615.3 L2908.6,614.5 L2912.3,614.3 L2916.0,614.6 L2919.7,614.1 L2923.4,615.3 L2927.1,614.7 L2930.8,614.5 L2934.5,613.9 L2938.2,613.9 L2941.9,613.3 L2945.6,614.9 L2949.3,613.5 L2953.0,613.9 L2956.7,614.9 L2960.4,615.4 L2964.1,612.8 L2967.9,614.4 L2971.6,612.8 L2975.3,614.3 L2979.0,615.0 L2982.7,614.6 L2986.4,614.5 L2990.1,614.4 L2993.8,612.6 L2997.5,614.5 L3001.2,614.2 L3004.9,614.6 L3008.6,614.2 L3012.3,613.5 L3016.0,614.2 L3019.7,614.2 L3023.4,614.2 L3027.2,613.8 L3030.9,615.5 L3034.6,613.1 L3038.3,614.5 L3042.0,614.7 L3045.7,614.8 L3049.4,613.7 L3053.1,613.5 L3056.8,615.8 L3060.5,614.6 L3064.2,614.4 L3067.9,615.3 L3071.6,615.4 L3075.3,614.9 L3079.0,614.0 L3082.8,613.6 L3086.5,614.7 L3090.2,613.5 L3093.9,615.7 L3097.6,614.0 L3101.3,615.2 L3105.0,614.7 L3108.7,614.8 L3112.4,614.6 L3116.1,615.7 L3119.8,613.7 L3123.5,616.3 L3127.2,614.0 L3130.9,614.0 L3134.6,613.6 L3138.3,614.1 L3142.1,613.3 L3145.8,614.0 L3149.5,616.0 L3153.2,614.1 L3156.9,613.9 L3160.6,614.0 L3164.3,613.7 L3168.0,614.2" fill="none" stroke="#fddd60" stroke-width="4" stroke-linejoin="round"/><rect x="3216" y="764" width="50" height="4.2" fill="#fddd60"/><circle cx="3241" cy="766" r="10.8" fill="#fddd60"/><rect x="1123" y="1089.8" width="2069" height="2" fill="#484753"/><rect x="1123" y="1137.7" width="2069" height="2" fill="#484753"/><rect x="1123" y="1185.7" width="2069" height="2" fill="#484753"/><rect x="1123" y="1233.6" width="2069" height="2" fill="#484753"/><rect x="1123" y="1281.5" width="2069" height="2" fill="#484753"/><rect x="1242.7" y="1306.5" width="71" height="23.9" fill="#4992ff"/><rect x="1346.1" y="1110.2" width="71" height="220.3" fill="#4992ff"/><rect x="1449.6" y="1196.4" width="71" height="134.1" fill="#4992ff"/><rect x="1553.0" y="1282.6" width="71" height="47.9" fill="#4992ff"/><rect x="1656.5" y="1301.8" width="71" height="28.7" fill="#4992ff"/><rect x="1759.9" y="1325.7" width="71" height="4.8" fill="#4992ff"/><rect x="1123" y="1329.3" width="2070" height="2.4" fill="#b9b8ce"/><rect x="1122.0" y="1330" width="2" height="9" fill="#b9b8ce"/><rect x="1225.5" y="1330" width="2" height="9" fill="#b9b8ce"/><rect x="1328.9" y="1330" width="2" height="9" fill="#b9b8ce"/><rect x="1432.3" y="1330" width="2" height="9" fill="#b9b8ce"/><rect x="1535.8" y="1330" width="2" height="9" fill="#b9b8ce"/><rect x="1639.2" y="1330" width="2" height="9" fill="#b9b8ce"/><rect x="1742.7" y="1330" width="2" height="9" fill="#b9b8ce"/><rect x="1846.2" y="1330" width="2" height="9" fill="#b9b8ce"/><rect x="1949.6" y="1330" width="2" height="9" fill="#b9b8ce"/><rect x="2053.1" y="1330" width="2" height="9" fill="#b9b8ce"/><rect x="2156.5" y="1330" width="2" height="9" fill="#b9b8ce"/><rect x="2259.9" y="1330" width="2" height="9" fill="#b9b8ce"/><rect x="2363.4" y="1330" width="2" height="9" fill="#b9b8ce"/><rect x="2466.9" y="1330" width="2" height="9" fill="#b9b8ce"/><rect x="2570.3" y="1330" width="2" height="9" fill="#b9b8ce"/><rect x="2673.8" y="1330" width="2" height="9" fill="#b9b8ce"/><rect x="2777.2" y="1330" width="2" height="9" fill="#b9b8ce"/><rect x="2880.7" y="1330" width="2" height="9" fill="#b9b8ce"/><rect x="2984.1" y="1330" width="2" height="9" fill="#b9b8ce"/><rect x="3087.6" y="1330" width="2" height="9" fill="#b9b8ce"/><rect x="3191.0" y="1330" width="2" height="9" fill="#b9b8ce"/><rect x="3248" y="1432" width="50" height="28" rx="8" fill="#4992ff"/><rect x="2028.3" y="1599.80" width="32.299999999999955" height="12.32" rx="3.45" fill="#ffffff"/><circle cx="2048.16" cy="1605.96" r="1.45" fill="#000080"/><circle cx="2052.36" cy="1605.96" r="1.45" fill="#000080"/><rect x="2028.3" y="1615.68" width="32.299999999999955" height="12.32" rx="3.45" fill="#ffffff"/><circle cx="2048.16" cy="1621.84" r="1.45" fill="#000080"/><circle cx="2052.36" cy="1621.84" r="1.45" fill="#000080"/></svg>
<div class="t" style="left:89.13px;top:32.39px;font-size:32.85px;color:#ffffff;transform:scaleX(0.9528);">LibreQoS Long-Term Stats</div>
<div class="t" style="left:483.37px;top:41.54px;font-size:21.80px;color:#ffffff;font-weight:700;transform:scaleX(0.9138);">BETA 0</div>
<div class="t" style="left:3027.35px;top:34.59px;font-size:32.85px;color:#ffffff;">24h</div>
<div class="t" style="left:3179.62px;top:34.68px;font-size:32.27px;color:#b1b5b8;transform:scaleX(0.9425);">Search</div>
<div class="t" style="left:68.16px;top:155.54px;font-size:31.25px;color:#ffffff;transform:scaleX(0.9137);">Dashboard</div>
<div class="t" style="left:68.14px;top:229.84px;font-size:31.25px;color:#6ea8fe;transform:scaleX(0.8903);">Shaper Nodes</div>
<div class="t" style="left:64.42px;top:304.04px;font-size:31.25px;color:#6ea8fe;transform:scaleX(0.9018);">Site Tree</div>
<div class="t" style="left:70.58px;top:378.04px;font-size:31.25px;color:#6ea8fe;transform:scaleX(0.9458);">Reports</div>
<div class="t" style="left:67.74px;top:452.04px;font-size:31.25px;color:#6ea8fe;transform:scaleX(0.8809);">Possible Issues</div>
<div class="t" style="left:71.03px;top:599.84px;font-size:31.25px;color:#6ea8fe;transform:scaleX(0.9646);">Logout</div>
<div class="t" style="left:-0.13px;top:2666.56px;font-size:32.41px;color:#dee2e6;transform:scaleX(0.9924);">Copyright © 2023 LibreQoS</div>
<div class="t" style="left:862.81px;top:140.59px;font-size:23.98px;color:#dee2e6;font-weight:700;transform:scaleX(0.9958);">(Root)</div>
<div class="t" style="left:1229.20px;top:138.69px;font-size:25.87px;color:#ffffff;transform:scaleX(0.9163);">Children --</div>
<div class="t" style="left:945.44px;top:217.43px;font-size:39.53px;color:#dee2e6;transform:scaleX(1.0769);">Throughput</div>
<div class="t" style="left:1190.34px;top:225.74px;font-size:29.36px;color:#ffffff;">Throughput</div>
<div class="t" style="left:1374.17px;top:225.74px;font-size:29.36px;color:#ffffff;transform:scaleX(0.9270);">Packets</div>
<div class="t" style="left:1505.12px;top:225.74px;font-size:29.36px;color:#ffffff;transform:scaleX(0.9254);">Child Sites</div>
<div class="t" style="left:944.76px;top:867.57px;font-size:39.24px;color:#dee2e6;transform:scaleX(1.0064);">Latency (TCP Round-Trip Time)</div>
<div class="t" style="left:1533.62px;top:875.74px;font-size:29.36px;color:#ffffff;transform:scaleX(0.9889);">Histogram</div>
<div class="t" style="left:1699.39px;top:875.74px;font-size:29.36px;color:#ffffff;transform:scaleX(0.9198);">Time_Series</div>
<div class="t" style="left:934.64px;top:1517.93px;font-size:39.53px;color:#dee2e6;transform:scaleX(1.0370);">Heatmaps</div>
<div class="t" style="left:1148.40px;top:1525.74px;font-size:29.36px;color:#ffffff;transform:scaleX(0.9107);">TCP Round-Trip Time</div>
<div class="t" style="left:1444.34px;top:1525.74px;font-size:29.36px;color:#ffffff;transform:scaleX(0.9967);">Throughput</div>
<div class="t" style="left:1080.59px;top:394.74px;font-size:23.69px;color:#b9b8ce;transform:scaleX(1.0165);">2.5G</div>
<div class="t" style="left:1080.59px;top:434.74px;font-size:23.69px;color:#b9b8ce;transform:scaleX(1.0165);">2.0G</div>
<div class="t" style="left:1080.88px;top:474.74px;font-size:23.69px;color:#b9b8ce;transform:scaleX(1.0107);">1.5G</div>
<div class="t" style="left:1080.88px;top:514.74px;font-size:23.69px;color:#b9b8ce;transform:scaleX(1.0107);">1.0G</div>
<div class="t" style="left:1048.99px;top:554.74px;font-size:23.69px;color:#b9b8ce;transform:scaleX(1.0640);">500.0M</div>
<div class="t" style="left:1118.56px;top:594.74px;font-size:23.69px;color:#b9b8ce;transform:scaleX(1.0154);">0</div>
<div class="t" style="left:1048.99px;top:634.74px;font-size:23.69px;color:#b9b8ce;transform:scaleX(1.0640);">500.0M</div>
<div class="t" style="left:1335.10px;top:662.69px;font-size:23.98px;color:#b9b8ce;transform:scaleX(1.0375);">11/13/2023, 12:00:00 PM</div>
<div class="t" style="left:1688.10px;top:662.69px;font-size:23.98px;color:#b9b8ce;transform:scaleX(1.0388);">11/13/2023, 4:00:00 PM</div>
<div class="t" style="left:2034.70px;top:662.69px;font-size:23.98px;color:#b9b8ce;transform:scaleX(1.0404);">11/13/2023, 8:00:00 PM</div>
<div class="t" style="left:2373.59px;top:662.69px;font-size:23.98px;color:#b9b8ce;transform:scaleX(1.0469);">11/14/2023, 12:00:00 AM</div>
<div class="t" style="left:2728.10px;top:662.69px;font-size:23.98px;color:#b9b8ce;transform:scaleX(1.0428);">11/14/2023, 4:00:00 AM</div>
<div class="t" style="left:1078.90px;top:1076.79px;font-size:23.40px;color:#b9b8ce;transform:scaleX(1.0712);">50</div>
<div class="t" style="left:1079.33px;top:1124.69px;font-size:23.40px;color:#b9b8ce;transform:scaleX(1.0538);">40</div>
<div class="t" style="left:1078.95px;top:1172.69px;font-size:23.40px;color:#b9b8ce;transform:scaleX(1.0692);">30</div>
<div class="t" style="left:1078.63px;top:1220.59px;font-size:23.40px;color:#b9b8ce;transform:scaleX(1.0820);">20</div>
<div class="t" style="left:1077.92px;top:1268.49px;font-size:23.40px;color:#b9b8ce;transform:scaleX(1.1100);">10</div>
<div class="t" style="left:1092.60px;top:1316.49px;font-size:23.40px;color:#b9b8ce;transform:scaleX(1.0906);">0</div>
<div class="t" style="left:1167.74px;top:1344.74px;font-size:23.69px;color:#b9b8ce;transform:scaleX(1.0596);">0</div>
<div class="t" style="left:1263.25px;top:1344.74px;font-size:23.69px;color:#b9b8ce;transform:scaleX(1.0964);">10</div>
<div class="t" style="left:1367.40px;top:1344.74px;font-size:23.69px;color:#b9b8ce;transform:scaleX(1.0687);">20</div>
<div class="t" style="left:1471.17px;top:1344.74px;font-size:23.69px;color:#b9b8ce;transform:scaleX(1.0561);">30</div>
<div class="t" style="left:1575.01px;top:1344.74px;font-size:23.69px;color:#b9b8ce;transform:scaleX(1.0409);">40</div>
<div class="t" style="left:1678.02px;top:1344.74px;font-size:23.69px;color:#b9b8ce;transform:scaleX(1.0581);">50</div>
<div class="t" style="left:1781.19px;top:1344.74px;font-size:23.69px;color:#b9b8ce;transform:scaleX(1.0692);">60</div>
<div class="t" style="left:1884.63px;top:1344.74px;font-size:23.69px;color:#b9b8ce;transform:scaleX(1.0697);">70</div>
<div class="t" style="left:1988.28px;top:1344.74px;font-size:23.69px;color:#b9b8ce;transform:scaleX(1.0616);">80</div>
<div class="t" style="left:2091.64px;top:1344.74px;font-size:23.69px;color:#b9b8ce;transform:scaleX(1.0651);">90</div>
<div class="t" style="left:2188.03px;top:1344.74px;font-size:23.69px;color:#b9b8ce;transform:scaleX(1.0489);">100</div>
<div class="t" style="left:2291.48px;top:1344.74px;font-size:23.69px;color:#b9b8ce;transform:scaleX(1.0489);">110</div>
<div class="t" style="left:2394.93px;top:1344.74px;font-size:23.69px;color:#b9b8ce;transform:scaleX(1.0489);">120</div>
<div class="t" style="left:2498.38px;top:1344.74px;font-size:23.69px;color:#b9b8ce;transform:scaleX(1.0489);">130</div>
<div class="t" style="left:2601.83px;top:1344.74px;font-size:23.69px;color:#b9b8ce;transform:scaleX(1.0489);">140</div>
<div class="t" style="left:2705.28px;top:1344.74px;font-size:23.69px;color:#b9b8ce;transform:scaleX(1.0489);">150</div>
<div class="t" style="left:2808.73px;top:1344.74px;font-size:23.69px;color:#b9b8ce;transform:scaleX(1.0489);">160</div>
<div class="t" style="left:2912.18px;top:1344.74px;font-size:23.69px;color:#b9b8ce;transform:scaleX(1.0489);">170</div>
<div class="t" style="left:3015.63px;top:1344.74px;font-size:23.69px;color:#b9b8ce;transform:scaleX(1.0489);">180</div>
<div class="t" style="left:3119.08px;top:1344.74px;font-size:23.69px;color:#b9b8ce;transform:scaleX(1.0489);">190</div>
<div class="t" style="left:1066.64px;top:1035.21px;font-size:23.26px;color:#b9b8ce;transform:scaleX(1.0987);">frequency</div>
<div class="t" style="left:3274.11px;top:753.16px;font-size:30.52px;color:#b9b8ce;font-weight:700;transform:scaleX(0.9271);font-style:italic;">ГГXИЛЯГЛ</div>
<div style="position:absolute;left:3300px;top:1420px;width:152px;height:50px;overflow:hidden;z-index:3">
<div class="t" style="left:6.53px;top:13.16px;font-size:30.52px;color:#b9b8ce;font-weight:700;transform:scaleX(0.9652);font-style:italic;">ГГXИЛЯГЛ</div>
</div>
<div class="t" style="left:2070.52px;top:1595.31px;font-size:42.15px;color:#ffffff;font-weight:700;transform:scaleX(0.8781);font-style:italic;">ГГXИЛЯГЛЛ</div>
<div class="t" style="left:1578.56px;top:1651.02px;font-size:20.64px;color:#000000;">26</div>
<div class="t" style="left:1704.76px;top:1651.02px;font-size:20.64px;color:#000000;">26</div>
<div class="t" style="left:1830.96px;top:1651.02px;font-size:20.64px;color:#000000;">26</div>
<div class="t" style="left:1957.16px;top:1651.02px;font-size:20.64px;color:#000000;">26</div>
<div class="t" style="left:2083.36px;top:1651.02px;font-size:20.64px;color:#000000;">26</div>
<div class="t" style="left:2209.56px;top:1651.02px;font-size:20.64px;color:#000000;">26</div>
<div class="t" style="left:2335.76px;top:1651.02px;font-size:20.64px;color:#000000;">26</div>
<div class="t" style="left:2461.96px;top:1651.02px;font-size:20.64px;color:#000000;">26</div>
<div class="t" style="left:2588.16px;top:1651.02px;font-size:20.64px;color:#000000;">26</div>
<div class="t" style="left:2714.42px;top:1651.02px;font-size:20.64px;color:#000000;">27</div>
<div class="t" style="left:2840.62px;top:1651.02px;font-size:20.64px;color:#000000;">27</div>
<div class="t" style="left:2966.82px;top:1651.02px;font-size:20.64px;color:#000000;">27</div>
<div class="t" style="left:3093.02px;top:1651.02px;font-size:20.64px;color:#000000;">27</div>
<div class="t" style="left:3219.22px;top:1651.02px;font-size:20.64px;color:#000000;">27</div>
<div class="t" style="left:3345.42px;top:1651.02px;font-size:20.64px;color:#000000;">27</div>
<div class="t" style="left:1037.18px;top:1647.46px;font-size:25.44px;color:#dee2e6;font-weight:700;transform:scaleX(1.0696);font-style:italic;text-decoration:underline;text-decoration-thickness:2px;text-underline-offset:0px;">LIWFWLWYIIXAF_Z_AMTUZIH_WUNT</div>
<div class="t" style="left:1578.56px;top:1691.02px;font-size:20.64px;color:#000000;">26</div>
<div class="t" style="left:1704.76px;top:1691.02px;font-size:20.64px;color:#000000;">26</div>
<div class="t" style="left:1830.96px;top:1691.02px;font-size:20.64px;color:#000000;">26</div>
<div class="t" style="left:1957.16px;top:1691.02px;font-size:20.64px;color:#000000;">26</div>
<div class="t" style="left:2083.36px;top:1691.02px;font-size:20.64px;color:#000000;">26</div>
<div class="t" style="left:2209.56px;top:1691.02px;font-size:20.64px;color:#000000;">26</div>
<div class="t" style="left:2335.76px;top:1691.02px;font-size:20.64px;color:#000000;">26</div>
<div class="t" style="left:2461.96px;top:1691.02px;font-size:20.64px;color:#000000;">26</div>
<div class="t" style="left:2588.16px;top:1691.02px;font-size:20.64px;color:#000000;">26</div>
<div class="t" style="left:2714.42px;top:1691.02px;font-size:20.64px;color:#000000;">27</div>
<div class="t" style="left:2840.62px;top:1691.02px;font-size:20.64px;color:#000000;">27</div>
<div class="t" style="left:2966.82px;top:1691.02px;font-size:20.64px;color:#000000;">27</div>
<div class="t" style="left:3093.02px;top:1691.02px;font-size:20.64px;color:#000000;">27</div>
<div class="t" style="left:3219.22px;top:1691.02px;font-size:20.64px;color:#000000;">27</div>
<div class="t" style="left:3345.42px;top:1691.02px;font-size:20.64px;color:#000000;">27</div>
<div class="t" style="left:1196.84px;top:1687.46px;font-size:25.44px;color:#dee2e6;font-weight:700;transform:scaleX(0.9779);font-style:italic;text-decoration:underline;text-decoration-thickness:2px;text-underline-offset:0px;">LTF_TNEYJMAMK_NS_RXL</div>
<div class="t" style="left:1578.56px;top:1731.02px;font-size:20.64px;color:#000000;">26</div>
<div class="t" style="left:1704.76px;top:1731.02px;font-size:20.64px;color:#000000;">26</div>
<div class="t" style="left:1830.96px;top:1731.02px;font-size:20.64px;color:#000000;">26</div>
<div class="t" style="left:1957.16px;top:1731.02px;font-size:20.64px;color:#000000;">26</div>
<div class="t" style="left:2083.36px;top:1731.02px;font-size:20.64px;color:#000000;">26</div>
<div class="t" style="left:2209.56px;top:1731.02px;font-size:20.64px;color:#000000;">26</div>
<div class="t" style="left:2335.76px;top:1731.02px;font-size:20.64px;color:#000000;">26</div>
<div class="t" style="left:2461.96px;top:1731.02px;font-size:20.64px;color:#000000;">26</div>
<div class="t" style="left:2588.16px;top:1731.02px;font-size:20.64px;color:#000000;">26</div>
<div class="t" style="left:2714.42px;top:1731.02px;font-size:20.64px;color:#000000;">27</div>
<div class="t" style="left:2840.62px;top:1731.02px;font-size:20.64px;color:#000000;">27</div>
<div class="t" style="left:2966.82px;top:1731.02px;font-size:20.64px;color:#000000;">27</div>
<div class="t" style="left:3093.02px;top:1731.02px;font-size:20.64px;color:#000000;">27</div>
<div class="t" style="left:3219.22px;top:1731.02px;font-size:20.64px;color:#000000;">27</div>
<div class="t" style="left:3345.42px;top:1731.02px;font-size:20.64px;color:#000000;">27</div>
<div class="t" style="left:1080.37px;top:1727.46px;font-size:25.44px;color:#dee2e6;font-weight:700;transform:scaleX(0.9553);font-style:italic;text-decoration:underline;text-decoration-thickness:2px;text-underline-offset:0px;">MX_VLJ_WTZKJT_F_V_AAKJNKKKTS</div>
<div class="t" style="left:1578.56px;top:1771.02px;font-size:20.64px;color:#000000;">26</div>
<div class="t" style="left:1704.76px;top:1771.02px;font-size:20.64px;color:#000000;">26</div>
<div class="t" style="left:1830.96px;top:1771.02px;font-size:20.64px;color:#000000;">26</div>
<div class="t" style="left:1957.16px;top:1771.02px;font-size:20.64px;color:#000000;">26</div>
<div class="t" style="left:2083.36px;top:1771.02px;font-size:20.64px;color:#000000;">26</div>
<div class="t" style="left:2209.56px;top:1771.02px;font-size:20.64px;color:#000000;">26</div>
<div class="t" style="left:2335.76px;top:1771.02px;font-size:20.64px;color:#000000;">26</div>
<div class="t" style="left:2461.96px;top:1771.02px;font-size:20.64px;color:#000000;">26</div>
<div class="t" style="left:2588.16px;top:1771.02px;font-size:20.64px;color:#000000;">26</div>
<div class="t" style="left:2714.42px;top:1771.02px;font-size:20.64px;color:#000000;">27</div>
<div class="t" style="left:2840.62px;top:1771.02px;font-size:20.64px;color:#000000;">27</div>
<div class="t" style="left:2966.82px;top:1771.02px;font-size:20.64px;color:#000000;">27</div>
<div class="t" style="left:3093.02px;top:1771.02px;font-size:20.64px;color:#000000;">27</div>
<div class="t" style="left:3219.22px;top:1771.02px;font-size:20.64px;color:#000000;">27</div>
<div class="t" style="left:3345.42px;top:1771.02px;font-size:20.64px;color:#000000;">27</div>
<div class="t" style="left:1128.23px;top:1767.46px;font-size:25.44px;color:#dee2e6;font-weight:700;transform:scaleX(1.0199);font-style:italic;text-decoration:underline;text-decoration-thickness:2px;text-underline-offset:0px;">ZWE_ZSAKUYKMFRSMHN_EKS</div>
<div class="t" style="left:1578.56px;top:1811.02px;font-size:20.64px;color:#000000;">26</div>
<div class="t" style="left:1704.76px;top:1811.02px;font-size:20.64px;color:#000000;">26</div>
<div class="t" style="left:1830.96px;top:1811.02px;font-size:20.64px;color:#000000;">26</div>
<div class="t" style="left:1957.16px;top:1811.02px;font-size:20.64px;color:#000000;">26</div>
<div class="t" style="left:2083.36px;top:1811.02px;font-size:20.64px;color:#000000;">26</div>
<div class="t" style="left:2209.56px;top:1811.02px;font-size:20.64px;color:#000000;">26</div>
<div class="t" style="left:2335.76px;top:1811.02px;font-size:20.64px;color:#000000;">26</div>
<div class="t" style="left:2461.96px;top:1811.02px;font-size:20.64px;color:#000000;">26</div>
<div class="t" style="left:2588.16px;top:1811.02px;font-size:20.64px;color:#000000;">26</div>
<div class="t" style="left:2714.42px;top:1811.02px;font-size:20.64px;color:#000000;">27</div>
<div class="t" style="left:2840.62px;top:1811.02px;font-size:20.64px;color:#000000;">27</div>
<div class="t" style="left:2966.82px;top:1811.02px;font-size:20.64px;color:#000000;">27</div>
<div class="t" style="left:3093.02px;top:1811.02px;font-size:20.64px;color:#000000;">27</div>
<div class="t" style="left:3219.22px;top:1811.02px;font-size:20.64px;color:#000000;">27</div>
<div class="t" style="left:3345.42px;top:1811.02px;font-size:20.64px;color:#000000;">27</div>
<div class="t" style="left:1315.32px;top:1807.46px;font-size:25.44px;color:#dee2e6;font-weight:700;transform:scaleX(0.9859);font-style:italic;text-decoration:underline;text-decoration-thickness:2px;text-underline-offset:0px;">RTFHEK_UL_U_Z</div>
<div class="t" style="left:1578.63px;top:1851.02px;font-size:20.64px;color:#000000;">30</div>
<div class="t" style="left:1704.82px;top:1851.02px;font-size:20.64px;color:#000000;">27</div>
<div class="t" style="left:1830.80px;top:1851.02px;font-size:20.64px;color:#000000;">24</div>
<div class="t" style="left:1957.16px;top:1851.02px;font-size:20.64px;color:#000000;">23</div>
<div class="t" style="left:2083.20px;top:1851.02px;font-size:20.64px;color:#000000;">24</div>
<div class="t" style="left:2209.73px;top:1851.02px;font-size:20.64px;color:#000000;">31</div>
<div class="t" style="left:2335.76px;top:1851.02px;font-size:20.64px;color:#000000;">23</div>
<div class="t" style="left:2461.95px;top:1851.02px;font-size:20.64px;color:#000000;">28</div>
<div class="t" style="left:2588.19px;top:1851.02px;font-size:20.64px;color:#000000;">29</div>
<div class="t" style="left:2714.55px;top:1851.02px;font-size:20.64px;color:#000000;">32</div>
<div class="t" style="left:2840.72px;top:1851.02px;font-size:20.64px;color:#000000;">39</div>
<div class="t" style="left:2967.10px;top:1851.02px;font-size:20.64px;color:#000000;">42</div>
<div class="t" style="left:3093.15px;top:1851.02px;font-size:20.64px;color:#000000;">32</div>
<div class="t" style="left:3219.15px;top:1851.02px;font-size:20.64px;color:#000000;">28</div>
<div class="t" style="left:3345.46px;top:1851.02px;font-size:20.64px;color:#000000;">35</div>
<div class="t" style="left:1302.71px;top:1847.46px;font-size:25.44px;color:#dee2e6;font-weight:700;transform:scaleX(0.9905);font-style:italic;text-decoration:underline;text-decoration-thickness:2px;text-underline-offset:0px;">LT_E_LXAVZT_LM</div>
<div class="t" style="left:1578.75px;top:1891.02px;font-size:20.64px;color:#000000;">32</div>
<div class="t" style="left:1704.95px;top:1891.02px;font-size:20.64px;color:#000000;">32</div>
<div class="t" style="left:1831.15px;top:1891.02px;font-size:20.64px;color:#000000;">32</div>
<div class="t" style="left:1957.35px;top:1891.02px;font-size:20.64px;color:#000000;">32</div>
<div class="t" style="left:2083.55px;top:1891.02px;font-size:20.64px;color:#000000;">32</div>
<div class="t" style="left:2209.75px;top:1891.02px;font-size:20.64px;color:#000000;">32</div>
<div class="t" style="left:2335.95px;top:1891.02px;font-size:20.64px;color:#000000;">32</div>
<div class="t" style="left:2462.15px;top:1891.02px;font-size:20.64px;color:#000000;">32</div>
<div class="t" style="left:2588.35px;top:1891.02px;font-size:20.64px;color:#000000;">32</div>
<div class="t" style="left:2714.55px;top:1891.02px;font-size:20.64px;color:#000000;">32</div>
<div class="t" style="left:2840.75px;top:1891.02px;font-size:20.64px;color:#000000;">32</div>
<div class="t" style="left:2966.95px;top:1891.02px;font-size:20.64px;color:#000000;">32</div>
<div class="t" style="left:3093.15px;top:1891.02px;font-size:20.64px;color:#000000;">32</div>
<div class="t" style="left:3219.35px;top:1891.02px;font-size:20.64px;color:#000000;">32</div>
<div class="t" style="left:3345.55px;top:1891.02px;font-size:20.64px;color:#000000;">32</div>
<div class="t" style="left:1304.22px;top:1887.46px;font-size:25.44px;color:#dee2e6;font-weight:700;transform:scaleX(1.0090);font-style:italic;text-decoration:underline;text-decoration-thickness:2px;text-underline-offset:0px;">VM_AVFEJVU_L_I</div>
<div class="t" style="left:1578.62px;top:1931.02px;font-size:20.64px;color:#000000;">27</div>
<div class="t" style="left:1704.75px;top:1931.02px;font-size:20.64px;color:#000000;">28</div>
<div class="t" style="left:1830.95px;top:1931.02px;font-size:20.64px;color:#000000;">28</div>
<div class="t" style="left:1957.15px;top:1931.02px;font-size:20.64px;color:#000000;">28</div>
<div class="t" style="left:2083.35px;top:1931.02px;font-size:20.64px;color:#000000;">28</div>
<div class="t" style="left:2209.55px;top:1931.02px;font-size:20.64px;color:#000000;">28</div>
<div class="t" style="left:2335.75px;top:1931.02px;font-size:20.64px;color:#000000;">28</div>
<div class="t" style="left:2462.02px;top:1931.02px;font-size:20.64px;color:#000000;">27</div>
<div class="t" style="left:2588.15px;top:1931.02px;font-size:20.64px;color:#000000;">28</div>
<div class="t" style="left:2714.35px;top:1931.02px;font-size:20.64px;color:#000000;">28</div>
<div class="t" style="left:2840.55px;top:1931.02px;font-size:20.64px;color:#000000;">28</div>
<div class="t" style="left:2966.75px;top:1931.02px;font-size:20.64px;color:#000000;">28</div>
<div class="t" style="left:3092.95px;top:1931.02px;font-size:20.64px;color:#000000;">28</div>
<div class="t" style="left:3219.15px;top:1931.02px;font-size:20.64px;color:#000000;">28</div>
<div class="t" style="left:3345.55px;top:1931.02px;font-size:20.64px;color:#000000;">32</div>
<div class="t" style="left:1300.28px;top:1927.46px;font-size:25.44px;color:#dee2e6;font-weight:700;transform:scaleX(0.9477);font-style:italic;text-decoration:underline;text-decoration-thickness:2px;text-underline-offset:0px;">Z_WKWJ_WLS_ITM</div>
<div class="t" style="left:1578.62px;top:1971.02px;font-size:20.64px;color:#000000;">27</div>
<div class="t" style="left:1704.82px;top:1971.02px;font-size:20.64px;color:#000000;">27</div>
<div class="t" style="left:1831.02px;top:1971.02px;font-size:20.64px;color:#000000;">27</div>
<div class="t" style="left:1957.22px;top:1971.02px;font-size:20.64px;color:#000000;">27</div>
<div class="t" style="left:2083.42px;top:1971.02px;font-size:20.64px;color:#000000;">27</div>
<div class="t" style="left:2209.62px;top:1971.02px;font-size:20.64px;color:#000000;">27</div>
<div class="t" style="left:2335.82px;top:1971.02px;font-size:20.64px;color:#000000;">27</div>
<div class="t" style="left:2462.02px;top:1971.02px;font-size:20.64px;color:#000000;">27</div>
<div class="t" style="left:2588.22px;top:1971.02px;font-size:20.64px;color:#000000;">27</div>
<div class="t" style="left:2714.42px;top:1971.02px;font-size:20.64px;color:#000000;">27</div>
<div class="t" style="left:2840.55px;top:1971.02px;font-size:20.64px;color:#000000;">28</div>
<div class="t" style="left:2966.75px;top:1971.02px;font-size:20.64px;color:#000000;">28</div>
<div class="t" style="left:3093.02px;top:1971.02px;font-size:20.64px;color:#000000;">27</div>
<div class="t" style="left:3219.15px;top:1971.02px;font-size:20.64px;color:#000000;">28</div>
<div class="t" style="left:3345.42px;top:1971.02px;font-size:20.64px;color:#000000;">27</div>
<div class="t" style="left:1307.42px;top:1967.46px;font-size:25.44px;color:#dee2e6;font-weight:700;transform:scaleX(1.0481);font-style:italic;text-decoration:underline;text-decoration-thickness:2px;text-underline-offset:0px;">VVZXJ_N_YETJX</div>
<div class="t" style="left:1578.62px;top:2011.02px;font-size:20.64px;color:#000000;">27</div>
<div class="t" style="left:1704.76px;top:2011.02px;font-size:20.64px;color:#000000;">23</div>
<div class="t" style="left:1831.13px;top:2011.02px;font-size:20.64px;color:#000000;">31</div>
<div class="t" style="left:1957.22px;top:2011.02px;font-size:20.64px;color:#000000;">22</div>
<div class="t" style="left:2083.36px;top:2011.02px;font-size:20.64px;color:#000000;">26</div>
<div class="t" style="left:2209.75px;top:2011.02px;font-size:20.64px;color:#000000;">32</div>
<div class="t" style="left:2335.82px;top:2011.02px;font-size:20.64px;color:#000000;">27</div>
<div class="t" style="left:2461.96px;top:2011.02px;font-size:20.64px;color:#000000;">26</div>
<div class="t" style="left:2588.16px;top:2011.02px;font-size:20.64px;color:#000000;">23</div>
<div class="t" style="left:2714.48px;top:2011.02px;font-size:20.64px;color:#000000;">33</div>
<div class="t" style="left:2840.90px;top:2011.02px;font-size:20.64px;color:#000000;">47</div>
<div class="t" style="left:2966.88px;top:2011.02px;font-size:20.64px;color:#000000;">33</div>
<div class="t" style="left:3093.15px;top:2011.02px;font-size:20.64px;color:#000000;">37</div>
<div class="t" style="left:3219.26px;top:2011.02px;font-size:20.64px;color:#000000;">35</div>
<div class="t" style="left:3345.55px;top:2011.02px;font-size:20.64px;color:#000000;">32</div>
<div class="t" style="left:1309.98px;top:2007.46px;font-size:25.44px;color:#dee2e6;font-weight:700;transform:scaleX(0.9838);font-style:italic;text-decoration:underline;text-decoration-thickness:2px;text-underline-offset:0px;">WXISVLIS_K_K_R</div>
<div class="t" style="left:1578.59px;top:2051.02px;font-size:20.64px;color:#000000;">29</div>
<div class="t" style="left:1704.79px;top:2051.02px;font-size:20.64px;color:#000000;">29</div>
<div class="t" style="left:1831.03px;top:2051.02px;font-size:20.64px;color:#000000;">30</div>
<div class="t" style="left:1957.23px;top:2051.02px;font-size:20.64px;color:#000000;">30</div>
<div class="t" style="left:2083.43px;top:2051.02px;font-size:20.64px;color:#000000;">30</div>
<div class="t" style="left:2209.63px;top:2051.02px;font-size:20.64px;color:#000000;">30</div>
<div class="t" style="left:2335.93px;top:2051.02px;font-size:20.64px;color:#000000;">31</div>
<div class="t" style="left:2462.13px;top:2051.02px;font-size:20.64px;color:#000000;">31</div>
<div class="t" style="left:2588.23px;top:2051.02px;font-size:20.64px;color:#000000;">30</div>
<div class="t" style="left:2714.43px;top:2051.02px;font-size:20.64px;color:#000000;">30</div>
<div class="t" style="left:2840.73px;top:2051.02px;font-size:20.64px;color:#000000;">31</div>
<div class="t" style="left:2966.93px;top:2051.02px;font-size:20.64px;color:#000000;">31</div>
<div class="t" style="left:3093.13px;top:2051.02px;font-size:20.64px;color:#000000;">31</div>
<div class="t" style="left:3219.33px;top:2051.02px;font-size:20.64px;color:#000000;">31</div>
<div class="t" style="left:3345.55px;top:2051.02px;font-size:20.64px;color:#000000;">32</div>
<div class="t" style="left:1299.12px;top:2047.46px;font-size:25.44px;color:#dee2e6;font-weight:700;transform:scaleX(1.1028);font-style:italic;text-decoration:underline;text-decoration-thickness:2px;text-underline-offset:0px;">MJIJ_YN_IAI_MU</div>
<div class="t" style="left:1578.53px;top:2091.02px;font-size:20.64px;color:#000000;">34</div>
<div class="t" style="left:1704.88px;top:2091.02px;font-size:20.64px;color:#000000;">36</div>
<div class="t" style="left:1831.06px;top:2091.02px;font-size:20.64px;color:#000000;">35</div>
<div class="t" style="left:1957.26px;top:2091.02px;font-size:20.64px;color:#000000;">35</div>
<div class="t" style="left:2083.46px;top:2091.02px;font-size:20.64px;color:#000000;">35</div>
<div class="t" style="left:2209.53px;top:2091.02px;font-size:20.64px;color:#000000;">34</div>
<div class="t" style="left:2335.88px;top:2091.02px;font-size:20.64px;color:#000000;">33</div>
<div class="t" style="left:2462.08px;top:2091.02px;font-size:20.64px;color:#000000;">33</div>
<div class="t" style="left:2588.28px;top:2091.02px;font-size:20.64px;color:#000000;">33</div>
<div class="t" style="left:2714.33px;top:2091.02px;font-size:20.64px;color:#000000;">34</div>
<div class="t" style="left:2840.68px;top:2091.02px;font-size:20.64px;color:#000000;">33</div>
<div class="t" style="left:2966.88px;top:2091.02px;font-size:20.64px;color:#000000;">33</div>
<div class="t" style="left:3093.08px;top:2091.02px;font-size:20.64px;color:#000000;">33</div>
<div class="t" style="left:3219.28px;top:2091.02px;font-size:20.64px;color:#000000;">33</div>
<div class="t" style="left:3345.33px;top:2091.02px;font-size:20.64px;color:#000000;">34</div>
<div class="t" style="left:1311.70px;top:2087.46px;font-size:25.44px;color:#dee2e6;font-weight:700;font-style:italic;text-decoration:underline;text-decoration-thickness:2px;text-underline-offset:0px;">HXMNVTHRMX_Y</div>
<div class="t" style="left:1578.84px;top:2131.02px;font-size:20.64px;color:#000000;">43</div>
<div class="t" style="left:1704.71px;top:2131.02px;font-size:20.64px;color:#000000;">54</div>
<div class="t" style="left:1830.90px;top:2131.02px;font-size:20.64px;color:#000000;">60</div>
<div class="t" style="left:1957.24px;top:2131.02px;font-size:20.64px;color:#000000;">55</div>
<div class="t" style="left:2083.46px;top:2131.02px;font-size:20.64px;color:#000000;">89</div>
<div class="t" style="left:2209.64px;top:2131.02px;font-size:20.64px;color:#000000;">55</div>
<div class="t" style="left:2335.86px;top:2131.02px;font-size:20.64px;color:#000000;">53</div>
<div class="t" style="left:2462.27px;top:2131.02px;font-size:20.64px;color:#000000;">49</div>
<div class="t" style="left:2588.47px;top:2131.02px;font-size:20.64px;color:#000000;">49</div>
<div class="t" style="left:2714.70px;top:2131.02px;font-size:20.64px;color:#000000;">47</div>
<div class="t" style="left:2840.84px;top:2131.02px;font-size:20.64px;color:#000000;">43</div>
<div class="t" style="left:2966.86px;top:2131.02px;font-size:20.64px;color:#000000;">53</div>
<div class="t" style="left:3092.95px;top:2131.02px;font-size:20.64px;color:#000000;">63</div>
<div class="t" style="left:3219.26px;top:2131.02px;font-size:20.64px;color:#000000;">53</div>
<div class="t" style="left:3345.39px;top:2131.02px;font-size:20.64px;color:#000000;">69</div>
<div class="t" style="left:1304.05px;top:2127.46px;font-size:25.44px;color:#dee2e6;font-weight:700;transform:scaleX(0.9719);font-style:italic;text-decoration:underline;text-decoration-thickness:2px;text-underline-offset:0px;">K_E_L_ISRSMKRX</div>
<div class="t" style="left:1578.64px;top:2171.02px;font-size:20.64px;color:#000000;">55</div>
<div class="t" style="left:1704.84px;top:2171.02px;font-size:20.64px;color:#000000;">55</div>
<div class="t" style="left:1831.24px;top:2171.02px;font-size:20.64px;color:#000000;">46</div>
<div class="t" style="left:1957.49px;top:2171.02px;font-size:20.64px;color:#000000;">41</div>
<div class="t" style="left:2083.49px;top:2171.02px;font-size:20.64px;color:#000000;">44</div>
<div class="t" style="left:2209.51px;top:2171.02px;font-size:20.64px;color:#000000;">54</div>
<div class="t" style="left:2329.75px;top:2171.02px;font-size:20.64px;color:#000000;">116</div>
<div class="t" style="left:2462.02px;top:2171.02px;font-size:20.64px;color:#000000;">62</div>
<div class="t" style="left:2588.50px;top:2171.02px;font-size:20.64px;color:#000000;">42</div>
<div class="t" style="left:2714.64px;top:2171.02px;font-size:20.64px;color:#000000;">43</div>
<div class="t" style="left:2840.60px;top:2171.02px;font-size:20.64px;color:#000000;">61</div>
<div class="t" style="left:2966.71px;top:2171.02px;font-size:20.64px;color:#000000;">54</div>
<div class="t" style="left:3093.19px;top:2171.02px;font-size:20.64px;color:#000000;">40</div>
<div class="t" style="left:3219.29px;top:2171.02px;font-size:20.64px;color:#000000;">44</div>
<div class="t" style="left:3345.41px;top:2171.02px;font-size:20.64px;color:#000000;">50</div>
<div class="t" style="left:1305.00px;top:2167.46px;font-size:25.44px;color:#dee2e6;font-weight:700;transform:scaleX(0.9503);font-style:italic;text-decoration:underline;text-decoration-thickness:2px;text-underline-offset:0px;">SNV_ML_NIN_LM_I</div>
<div class="t" style="left:1578.75px;top:2211.02px;font-size:20.64px;color:#000000;">37</div>
<div class="t" style="left:1704.95px;top:2211.02px;font-size:20.64px;color:#000000;">37</div>
<div class="t" style="left:1831.08px;top:2211.02px;font-size:20.64px;color:#000000;">36</div>
<div class="t" style="left:1957.28px;top:2211.02px;font-size:20.64px;color:#000000;">36</div>
<div class="t" style="left:2083.48px;top:2211.02px;font-size:20.64px;color:#000000;">36</div>
<div class="t" style="left:2209.68px;top:2211.02px;font-size:20.64px;color:#000000;">36</div>
<div class="t" style="left:2335.88px;top:2211.02px;font-size:20.64px;color:#000000;">36</div>
<div class="t" style="left:2462.08px;top:2211.02px;font-size:20.64px;color:#000000;">36</div>
<div class="t" style="left:2588.28px;top:2211.02px;font-size:20.64px;color:#000000;">36</div>
<div class="t" style="left:2714.48px;top:2211.02px;font-size:20.64px;color:#000000;">36</div>
<div class="t" style="left:2840.66px;top:2211.02px;font-size:20.64px;color:#000000;">35</div>
<div class="t" style="left:2966.88px;top:2211.02px;font-size:20.64px;color:#000000;">36</div>
<div class="t" style="left:3093.06px;top:2211.02px;font-size:20.64px;color:#000000;">35</div>
<div class="t" style="left:3219.28px;top:2211.02px;font-size:20.64px;color:#000000;">36</div>
<div class="t" style="left:3345.55px;top:2211.02px;font-size:20.64px;color:#000000;">37</div>
<div class="t" style="left:1309.79px;top:2207.46px;font-size:25.44px;color:#dee2e6;font-weight:700;transform:scaleX(0.9237);font-style:italic;text-decoration:underline;text-decoration-thickness:2px;text-underline-offset:0px;">XNN_YHLUXT_Y_K</div>
<div class="t" style="left:1578.61px;top:2251.02px;font-size:20.64px;color:#000000;">21</div>
<div class="t" style="left:1704.81px;top:2251.02px;font-size:20.64px;color:#000000;">21</div>
<div class="t" style="left:1831.01px;top:2251.02px;font-size:20.64px;color:#000000;">21</div>
<div class="t" style="left:1957.22px;top:2251.02px;font-size:20.64px;color:#000000;">22</div>
<div class="t" style="left:2083.41px;top:2251.02px;font-size:20.64px;color:#000000;">21</div>
<div class="t" style="left:2209.61px;top:2251.02px;font-size:20.64px;color:#000000;">21</div>
<div class="t" style="left:2335.81px;top:2251.02px;font-size:20.64px;color:#000000;">21</div>
<div class="t" style="left:2461.80px;top:2251.02px;font-size:20.64px;color:#000000;">24</div>
<div class="t" style="left:2588.16px;top:2251.02px;font-size:20.64px;color:#000000;">23</div>
<div class="t" style="left:2714.20px;top:2251.02px;font-size:20.64px;color:#000000;">24</div>
<div class="t" style="left:2840.56px;top:2251.02px;font-size:20.64px;color:#000000;">23</div>
<div class="t" style="left:2966.75px;top:2251.02px;font-size:20.64px;color:#000000;">28</div>
<div class="t" style="left:3092.96px;top:2251.02px;font-size:20.64px;color:#000000;">23</div>
<div class="t" style="left:3219.14px;top:2251.02px;font-size:20.64px;color:#000000;">25</div>
<div class="t" style="left:3345.41px;top:2251.02px;font-size:20.64px;color:#000000;">21</div>
<div class="t" style="left:1420.61px;top:2247.46px;font-size:25.44px;color:#dee2e6;font-weight:700;font-style:italic;text-decoration:underline;text-decoration-thickness:2px;text-underline-offset:0px;">J_VKWN</div>
<div class="t" style="left:1578.55px;top:2291.02px;font-size:20.64px;color:#000000;">28</div>
<div class="t" style="left:1704.75px;top:2291.02px;font-size:20.64px;color:#000000;">28</div>
<div class="t" style="left:1830.95px;top:2291.02px;font-size:20.64px;color:#000000;">28</div>
<div class="t" style="left:1957.22px;top:2291.02px;font-size:20.64px;color:#000000;">27</div>
<div class="t" style="left:2083.42px;top:2291.02px;font-size:20.64px;color:#000000;">27</div>
<div class="t" style="left:2209.62px;top:2291.02px;font-size:20.64px;color:#000000;">27</div>
<div class="t" style="left:2335.82px;top:2291.02px;font-size:20.64px;color:#000000;">27</div>
<div class="t" style="left:2461.95px;top:2291.02px;font-size:20.64px;color:#000000;">28</div>
<div class="t" style="left:2588.15px;top:2291.02px;font-size:20.64px;color:#000000;">28</div>
<div class="t" style="left:2714.42px;top:2291.02px;font-size:20.64px;color:#000000;">27</div>
<div class="t" style="left:2840.62px;top:2291.02px;font-size:20.64px;color:#000000;">27</div>
<div class="t" style="left:2966.75px;top:2291.02px;font-size:20.64px;color:#000000;">28</div>
<div class="t" style="left:3092.95px;top:2291.02px;font-size:20.64px;color:#000000;">28</div>
<div class="t" style="left:3219.15px;top:2291.02px;font-size:20.64px;color:#000000;">28</div>
<div class="t" style="left:3345.42px;top:2291.02px;font-size:20.64px;color:#000000;">27</div>
<div class="t" style="left:1278.29px;top:2287.46px;font-size:25.44px;color:#dee2e6;font-weight:700;transform:scaleX(1.0038);font-style:italic;text-decoration:underline;text-decoration-thickness:2px;text-underline-offset:0px;">EX_KXIHRHN_KK_V</div>
<div class="t" style="left:1555.58px;top:2328.71px;font-size:21px;color:#c9ccd1;transform:rotate(90deg) scaleX(1.0256);">11/13/2023, 8:12:00 AM</div>
<div class="t" style="left:1681.78px;top:2328.71px;font-size:21px;color:#c9ccd1;transform:rotate(90deg) scaleX(1.0256);">11/13/2023, 9:00:00 AM</div>
<div class="t" style="left:1807.98px;top:2328.71px;font-size:21px;color:#c9ccd1;transform:rotate(90deg) scaleX(1.0256);">11/13/2023, 9:48:00 AM</div>
<div class="t" style="left:1934.18px;top:2322.72px;font-size:21px;color:#c9ccd1;transform:rotate(90deg) scaleX(1.0256);">11/13/2023, 10:36:00 AM</div>
<div class="t" style="left:2060.38px;top:2322.72px;font-size:21px;color:#c9ccd1;transform:rotate(90deg) scaleX(1.0256);">11/13/2023, 11:24:00 AM</div>
<div class="t" style="left:2186.58px;top:2322.72px;font-size:21px;color:#c9ccd1;transform:rotate(90deg) scaleX(1.0256);">11/13/2023, 12:12:00 PM</div>
<div class="t" style="left:2312.78px;top:2328.71px;font-size:21px;color:#c9ccd1;transform:rotate(90deg) scaleX(1.0256);">11/13/2023, 1:00:00 PM</div>
<div class="t" style="left:2438.98px;top:2328.71px;font-size:21px;color:#c9ccd1;transform:rotate(90deg) scaleX(1.0256);">11/13/2023, 1:48:00 PM</div>
<div class="t" style="left:2565.18px;top:2328.71px;font-size:21px;color:#c9ccd1;transform:rotate(90deg) scaleX(1.0256);">11/13/2023, 2:36:00 PM</div>
<div class="t" style="left:2691.38px;top:2328.71px;font-size:21px;color:#c9ccd1;transform:rotate(90deg) scaleX(1.0256);">11/13/2023, 3:24:00 PM</div>
<div class="t" style="left:2817.58px;top:2328.71px;font-size:21px;color:#c9ccd1;transform:rotate(90deg) scaleX(1.0256);">11/13/2023, 4:12:00 PM</div>
<div class="t" style="left:2943.78px;top:2328.71px;font-size:21px;color:#c9ccd1;transform:rotate(90deg) scaleX(1.0256);">11/13/2023, 5:00:00 PM</div>
<div class="t" style="left:3069.98px;top:2328.71px;font-size:21px;color:#c9ccd1;transform:rotate(90deg) scaleX(1.0256);">11/13/2023, 5:48:00 PM</div>
<div class="t" style="left:3196.18px;top:2328.71px;font-size:21px;color:#c9ccd1;transform:rotate(90deg) scaleX(1.0256);">11/13/2023, 6:36:00 PM</div>
<div class="t" style="left:3322.38px;top:2328.71px;font-size:21px;color:#c9ccd1;transform:rotate(90deg) scaleX(1.0256);">11/13/2023, 7:24:00 PM</div></body></html>
